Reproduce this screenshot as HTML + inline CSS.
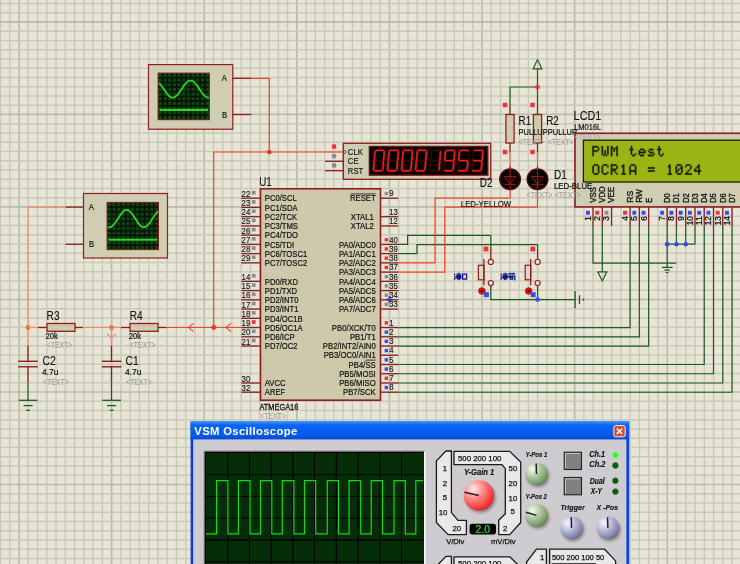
<!DOCTYPE html>
<html><head><meta charset="utf-8"><title>PWM test</title>
<style>html,body{margin:0;padding:0;background:#e8e5d7;overflow:hidden}#w{width:740px;height:564px;overflow:hidden;position:relative}svg{display:block;position:absolute;left:-12px;top:-12px;filter:blur(0.35px)}text{font-family:"Liberation Sans",sans-serif}.m{font-family:"Liberation Mono",monospace}</style>
</head><body><div id="w">
<svg width="764" height="588" viewBox="-12 -12 764 588">
<defs>
<radialGradient id="kr" cx="32%" cy="28%" r="78%"><stop offset="0" stop-color="#fff2f2"/><stop offset="0.3" stop-color="#ffa4a4"/><stop offset="0.65" stop-color="#ff5c5c"/><stop offset="1" stop-color="#dc2424"/></radialGradient>
<radialGradient id="kg" cx="32%" cy="28%" r="82%"><stop offset="0" stop-color="#f6faf0"/><stop offset="0.4" stop-color="#b4cca4"/><stop offset="0.8" stop-color="#7c9c6c"/><stop offset="1" stop-color="#547444"/></radialGradient>
<radialGradient id="kb" cx="32%" cy="28%" r="82%"><stop offset="0" stop-color="#f8f8ff"/><stop offset="0.4" stop-color="#bcbedc"/><stop offset="0.8" stop-color="#8486ac"/><stop offset="1" stop-color="#5c5e84"/></radialGradient>
<linearGradient id="tb" x1="0" y1="0" x2="0" y2="1"><stop offset="0" stop-color="#3a94ff"/><stop offset="0.2" stop-color="#0a64f4"/><stop offset="0.8" stop-color="#0458ec"/><stop offset="1" stop-color="#0246d2"/></linearGradient>
<filter id="glow" x="-20%" y="-20%" width="140%" height="140%"><feGaussianBlur stdDeviation="0.7"/></filter>
<filter id="sh" x="-30%" y="-30%" width="160%" height="160%"><feGaussianBlur stdDeviation="1.4"/></filter>
</defs>
<rect x="-12.00" y="-12.00" width="764.00" height="588.00" fill="#e8e5d7" stroke="none" stroke-width="1" />
<g shape-rendering="auto">
<line x1="-8.78" y1="-12.00" x2="-8.78" y2="576.00" stroke="#c8cab8" stroke-width="1.45" />
<line x1="0.48" y1="-12.00" x2="0.48" y2="576.00" stroke="#c8cab8" stroke-width="1.45" />
<line x1="9.74" y1="-12.00" x2="9.74" y2="576.00" stroke="#c8cab8" stroke-width="1.45" />
<line x1="19.00" y1="-12.00" x2="19.00" y2="576.00" stroke="#b7bca8" stroke-width="1.65" />
<line x1="28.26" y1="-12.00" x2="28.26" y2="576.00" stroke="#c8cab8" stroke-width="1.45" />
<line x1="37.52" y1="-12.00" x2="37.52" y2="576.00" stroke="#c8cab8" stroke-width="1.45" />
<line x1="46.78" y1="-12.00" x2="46.78" y2="576.00" stroke="#c8cab8" stroke-width="1.45" />
<line x1="56.04" y1="-12.00" x2="56.04" y2="576.00" stroke="#c8cab8" stroke-width="1.45" />
<line x1="65.30" y1="-12.00" x2="65.30" y2="576.00" stroke="#c8cab8" stroke-width="1.45" />
<line x1="74.57" y1="-12.00" x2="74.57" y2="576.00" stroke="#c8cab8" stroke-width="1.45" />
<line x1="83.83" y1="-12.00" x2="83.83" y2="576.00" stroke="#c8cab8" stroke-width="1.45" />
<line x1="93.09" y1="-12.00" x2="93.09" y2="576.00" stroke="#c8cab8" stroke-width="1.45" />
<line x1="102.35" y1="-12.00" x2="102.35" y2="576.00" stroke="#c8cab8" stroke-width="1.45" />
<line x1="111.61" y1="-12.00" x2="111.61" y2="576.00" stroke="#b7bca8" stroke-width="1.65" />
<line x1="120.87" y1="-12.00" x2="120.87" y2="576.00" stroke="#c8cab8" stroke-width="1.45" />
<line x1="130.13" y1="-12.00" x2="130.13" y2="576.00" stroke="#c8cab8" stroke-width="1.45" />
<line x1="139.39" y1="-12.00" x2="139.39" y2="576.00" stroke="#c8cab8" stroke-width="1.45" />
<line x1="148.65" y1="-12.00" x2="148.65" y2="576.00" stroke="#c8cab8" stroke-width="1.45" />
<line x1="157.91" y1="-12.00" x2="157.91" y2="576.00" stroke="#c8cab8" stroke-width="1.45" />
<line x1="167.18" y1="-12.00" x2="167.18" y2="576.00" stroke="#c8cab8" stroke-width="1.45" />
<line x1="176.44" y1="-12.00" x2="176.44" y2="576.00" stroke="#c8cab8" stroke-width="1.45" />
<line x1="185.70" y1="-12.00" x2="185.70" y2="576.00" stroke="#c8cab8" stroke-width="1.45" />
<line x1="194.96" y1="-12.00" x2="194.96" y2="576.00" stroke="#c8cab8" stroke-width="1.45" />
<line x1="204.22" y1="-12.00" x2="204.22" y2="576.00" stroke="#b7bca8" stroke-width="1.65" />
<line x1="213.48" y1="-12.00" x2="213.48" y2="576.00" stroke="#c8cab8" stroke-width="1.45" />
<line x1="222.74" y1="-12.00" x2="222.74" y2="576.00" stroke="#c8cab8" stroke-width="1.45" />
<line x1="232.00" y1="-12.00" x2="232.00" y2="576.00" stroke="#c8cab8" stroke-width="1.45" />
<line x1="241.26" y1="-12.00" x2="241.26" y2="576.00" stroke="#c8cab8" stroke-width="1.45" />
<line x1="250.52" y1="-12.00" x2="250.52" y2="576.00" stroke="#c8cab8" stroke-width="1.45" />
<line x1="259.79" y1="-12.00" x2="259.79" y2="576.00" stroke="#c8cab8" stroke-width="1.45" />
<line x1="269.05" y1="-12.00" x2="269.05" y2="576.00" stroke="#c8cab8" stroke-width="1.45" />
<line x1="278.31" y1="-12.00" x2="278.31" y2="576.00" stroke="#c8cab8" stroke-width="1.45" />
<line x1="287.57" y1="-12.00" x2="287.57" y2="576.00" stroke="#c8cab8" stroke-width="1.45" />
<line x1="296.83" y1="-12.00" x2="296.83" y2="576.00" stroke="#b7bca8" stroke-width="1.65" />
<line x1="306.09" y1="-12.00" x2="306.09" y2="576.00" stroke="#c8cab8" stroke-width="1.45" />
<line x1="315.35" y1="-12.00" x2="315.35" y2="576.00" stroke="#c8cab8" stroke-width="1.45" />
<line x1="324.61" y1="-12.00" x2="324.61" y2="576.00" stroke="#c8cab8" stroke-width="1.45" />
<line x1="333.87" y1="-12.00" x2="333.87" y2="576.00" stroke="#c8cab8" stroke-width="1.45" />
<line x1="343.13" y1="-12.00" x2="343.13" y2="576.00" stroke="#c8cab8" stroke-width="1.45" />
<line x1="352.40" y1="-12.00" x2="352.40" y2="576.00" stroke="#c8cab8" stroke-width="1.45" />
<line x1="361.66" y1="-12.00" x2="361.66" y2="576.00" stroke="#c8cab8" stroke-width="1.45" />
<line x1="370.92" y1="-12.00" x2="370.92" y2="576.00" stroke="#c8cab8" stroke-width="1.45" />
<line x1="380.18" y1="-12.00" x2="380.18" y2="576.00" stroke="#c8cab8" stroke-width="1.45" />
<line x1="389.44" y1="-12.00" x2="389.44" y2="576.00" stroke="#b7bca8" stroke-width="1.65" />
<line x1="398.70" y1="-12.00" x2="398.70" y2="576.00" stroke="#c8cab8" stroke-width="1.45" />
<line x1="407.96" y1="-12.00" x2="407.96" y2="576.00" stroke="#c8cab8" stroke-width="1.45" />
<line x1="417.22" y1="-12.00" x2="417.22" y2="576.00" stroke="#c8cab8" stroke-width="1.45" />
<line x1="426.48" y1="-12.00" x2="426.48" y2="576.00" stroke="#c8cab8" stroke-width="1.45" />
<line x1="435.74" y1="-12.00" x2="435.74" y2="576.00" stroke="#c8cab8" stroke-width="1.45" />
<line x1="445.01" y1="-12.00" x2="445.01" y2="576.00" stroke="#c8cab8" stroke-width="1.45" />
<line x1="454.27" y1="-12.00" x2="454.27" y2="576.00" stroke="#c8cab8" stroke-width="1.45" />
<line x1="463.53" y1="-12.00" x2="463.53" y2="576.00" stroke="#c8cab8" stroke-width="1.45" />
<line x1="472.79" y1="-12.00" x2="472.79" y2="576.00" stroke="#c8cab8" stroke-width="1.45" />
<line x1="482.05" y1="-12.00" x2="482.05" y2="576.00" stroke="#b7bca8" stroke-width="1.65" />
<line x1="491.31" y1="-12.00" x2="491.31" y2="576.00" stroke="#c8cab8" stroke-width="1.45" />
<line x1="500.57" y1="-12.00" x2="500.57" y2="576.00" stroke="#c8cab8" stroke-width="1.45" />
<line x1="509.83" y1="-12.00" x2="509.83" y2="576.00" stroke="#c8cab8" stroke-width="1.45" />
<line x1="519.09" y1="-12.00" x2="519.09" y2="576.00" stroke="#c8cab8" stroke-width="1.45" />
<line x1="528.36" y1="-12.00" x2="528.36" y2="576.00" stroke="#c8cab8" stroke-width="1.45" />
<line x1="537.62" y1="-12.00" x2="537.62" y2="576.00" stroke="#c8cab8" stroke-width="1.45" />
<line x1="546.88" y1="-12.00" x2="546.88" y2="576.00" stroke="#c8cab8" stroke-width="1.45" />
<line x1="556.14" y1="-12.00" x2="556.14" y2="576.00" stroke="#c8cab8" stroke-width="1.45" />
<line x1="565.40" y1="-12.00" x2="565.40" y2="576.00" stroke="#c8cab8" stroke-width="1.45" />
<line x1="574.66" y1="-12.00" x2="574.66" y2="576.00" stroke="#b7bca8" stroke-width="1.65" />
<line x1="583.92" y1="-12.00" x2="583.92" y2="576.00" stroke="#c8cab8" stroke-width="1.45" />
<line x1="593.18" y1="-12.00" x2="593.18" y2="576.00" stroke="#c8cab8" stroke-width="1.45" />
<line x1="602.44" y1="-12.00" x2="602.44" y2="576.00" stroke="#c8cab8" stroke-width="1.45" />
<line x1="611.70" y1="-12.00" x2="611.70" y2="576.00" stroke="#c8cab8" stroke-width="1.45" />
<line x1="620.96" y1="-12.00" x2="620.96" y2="576.00" stroke="#c8cab8" stroke-width="1.45" />
<line x1="630.23" y1="-12.00" x2="630.23" y2="576.00" stroke="#c8cab8" stroke-width="1.45" />
<line x1="639.49" y1="-12.00" x2="639.49" y2="576.00" stroke="#c8cab8" stroke-width="1.45" />
<line x1="648.75" y1="-12.00" x2="648.75" y2="576.00" stroke="#c8cab8" stroke-width="1.45" />
<line x1="658.01" y1="-12.00" x2="658.01" y2="576.00" stroke="#c8cab8" stroke-width="1.45" />
<line x1="667.27" y1="-12.00" x2="667.27" y2="576.00" stroke="#b7bca8" stroke-width="1.65" />
<line x1="676.53" y1="-12.00" x2="676.53" y2="576.00" stroke="#c8cab8" stroke-width="1.45" />
<line x1="685.79" y1="-12.00" x2="685.79" y2="576.00" stroke="#c8cab8" stroke-width="1.45" />
<line x1="695.05" y1="-12.00" x2="695.05" y2="576.00" stroke="#c8cab8" stroke-width="1.45" />
<line x1="704.31" y1="-12.00" x2="704.31" y2="576.00" stroke="#c8cab8" stroke-width="1.45" />
<line x1="713.57" y1="-12.00" x2="713.57" y2="576.00" stroke="#c8cab8" stroke-width="1.45" />
<line x1="722.84" y1="-12.00" x2="722.84" y2="576.00" stroke="#c8cab8" stroke-width="1.45" />
<line x1="732.10" y1="-12.00" x2="732.10" y2="576.00" stroke="#c8cab8" stroke-width="1.45" />
<line x1="741.36" y1="-12.00" x2="741.36" y2="576.00" stroke="#c8cab8" stroke-width="1.45" />
<line x1="750.62" y1="-12.00" x2="750.62" y2="576.00" stroke="#c8cab8" stroke-width="1.45" />
<line x1="-12.00" y1="-5.86" x2="752.00" y2="-5.86" stroke="#c8cab8" stroke-width="1.45" />
<line x1="-12.00" y1="3.40" x2="752.00" y2="3.40" stroke="#c8cab8" stroke-width="1.45" />
<line x1="-12.00" y1="12.65" x2="752.00" y2="12.65" stroke="#c8cab8" stroke-width="1.45" />
<line x1="-12.00" y1="21.90" x2="752.00" y2="21.90" stroke="#b7bca8" stroke-width="1.65" />
<line x1="-12.00" y1="31.15" x2="752.00" y2="31.15" stroke="#c8cab8" stroke-width="1.45" />
<line x1="-12.00" y1="40.40" x2="752.00" y2="40.40" stroke="#c8cab8" stroke-width="1.45" />
<line x1="-12.00" y1="49.66" x2="752.00" y2="49.66" stroke="#c8cab8" stroke-width="1.45" />
<line x1="-12.00" y1="58.91" x2="752.00" y2="58.91" stroke="#c8cab8" stroke-width="1.45" />
<line x1="-12.00" y1="68.16" x2="752.00" y2="68.16" stroke="#c8cab8" stroke-width="1.45" />
<line x1="-12.00" y1="77.41" x2="752.00" y2="77.41" stroke="#c8cab8" stroke-width="1.45" />
<line x1="-12.00" y1="86.66" x2="752.00" y2="86.66" stroke="#c8cab8" stroke-width="1.45" />
<line x1="-12.00" y1="95.92" x2="752.00" y2="95.92" stroke="#c8cab8" stroke-width="1.45" />
<line x1="-12.00" y1="105.17" x2="752.00" y2="105.17" stroke="#c8cab8" stroke-width="1.45" />
<line x1="-12.00" y1="114.42" x2="752.00" y2="114.42" stroke="#b7bca8" stroke-width="1.65" />
<line x1="-12.00" y1="123.67" x2="752.00" y2="123.67" stroke="#c8cab8" stroke-width="1.45" />
<line x1="-12.00" y1="132.92" x2="752.00" y2="132.92" stroke="#c8cab8" stroke-width="1.45" />
<line x1="-12.00" y1="142.18" x2="752.00" y2="142.18" stroke="#c8cab8" stroke-width="1.45" />
<line x1="-12.00" y1="151.43" x2="752.00" y2="151.43" stroke="#c8cab8" stroke-width="1.45" />
<line x1="-12.00" y1="160.68" x2="752.00" y2="160.68" stroke="#c8cab8" stroke-width="1.45" />
<line x1="-12.00" y1="169.93" x2="752.00" y2="169.93" stroke="#c8cab8" stroke-width="1.45" />
<line x1="-12.00" y1="179.18" x2="752.00" y2="179.18" stroke="#c8cab8" stroke-width="1.45" />
<line x1="-12.00" y1="188.44" x2="752.00" y2="188.44" stroke="#c8cab8" stroke-width="1.45" />
<line x1="-12.00" y1="197.69" x2="752.00" y2="197.69" stroke="#c8cab8" stroke-width="1.45" />
<line x1="-12.00" y1="206.94" x2="752.00" y2="206.94" stroke="#b7bca8" stroke-width="1.65" />
<line x1="-12.00" y1="216.19" x2="752.00" y2="216.19" stroke="#c8cab8" stroke-width="1.45" />
<line x1="-12.00" y1="225.44" x2="752.00" y2="225.44" stroke="#c8cab8" stroke-width="1.45" />
<line x1="-12.00" y1="234.70" x2="752.00" y2="234.70" stroke="#c8cab8" stroke-width="1.45" />
<line x1="-12.00" y1="243.95" x2="752.00" y2="243.95" stroke="#c8cab8" stroke-width="1.45" />
<line x1="-12.00" y1="253.20" x2="752.00" y2="253.20" stroke="#c8cab8" stroke-width="1.45" />
<line x1="-12.00" y1="262.45" x2="752.00" y2="262.45" stroke="#c8cab8" stroke-width="1.45" />
<line x1="-12.00" y1="271.70" x2="752.00" y2="271.70" stroke="#c8cab8" stroke-width="1.45" />
<line x1="-12.00" y1="280.96" x2="752.00" y2="280.96" stroke="#c8cab8" stroke-width="1.45" />
<line x1="-12.00" y1="290.21" x2="752.00" y2="290.21" stroke="#c8cab8" stroke-width="1.45" />
<line x1="-12.00" y1="299.46" x2="752.00" y2="299.46" stroke="#b7bca8" stroke-width="1.65" />
<line x1="-12.00" y1="308.71" x2="752.00" y2="308.71" stroke="#c8cab8" stroke-width="1.45" />
<line x1="-12.00" y1="317.96" x2="752.00" y2="317.96" stroke="#c8cab8" stroke-width="1.45" />
<line x1="-12.00" y1="327.22" x2="752.00" y2="327.22" stroke="#c8cab8" stroke-width="1.45" />
<line x1="-12.00" y1="336.47" x2="752.00" y2="336.47" stroke="#c8cab8" stroke-width="1.45" />
<line x1="-12.00" y1="345.72" x2="752.00" y2="345.72" stroke="#c8cab8" stroke-width="1.45" />
<line x1="-12.00" y1="354.97" x2="752.00" y2="354.97" stroke="#c8cab8" stroke-width="1.45" />
<line x1="-12.00" y1="364.22" x2="752.00" y2="364.22" stroke="#c8cab8" stroke-width="1.45" />
<line x1="-12.00" y1="373.48" x2="752.00" y2="373.48" stroke="#c8cab8" stroke-width="1.45" />
<line x1="-12.00" y1="382.73" x2="752.00" y2="382.73" stroke="#c8cab8" stroke-width="1.45" />
<line x1="-12.00" y1="391.98" x2="752.00" y2="391.98" stroke="#b7bca8" stroke-width="1.65" />
<line x1="-12.00" y1="401.23" x2="752.00" y2="401.23" stroke="#c8cab8" stroke-width="1.45" />
<line x1="-12.00" y1="410.48" x2="752.00" y2="410.48" stroke="#c8cab8" stroke-width="1.45" />
<line x1="-12.00" y1="419.74" x2="752.00" y2="419.74" stroke="#c8cab8" stroke-width="1.45" />
<line x1="-12.00" y1="428.99" x2="752.00" y2="428.99" stroke="#c8cab8" stroke-width="1.45" />
<line x1="-12.00" y1="438.24" x2="752.00" y2="438.24" stroke="#c8cab8" stroke-width="1.45" />
<line x1="-12.00" y1="447.49" x2="752.00" y2="447.49" stroke="#c8cab8" stroke-width="1.45" />
<line x1="-12.00" y1="456.74" x2="752.00" y2="456.74" stroke="#c8cab8" stroke-width="1.45" />
<line x1="-12.00" y1="466.00" x2="752.00" y2="466.00" stroke="#c8cab8" stroke-width="1.45" />
<line x1="-12.00" y1="475.25" x2="752.00" y2="475.25" stroke="#c8cab8" stroke-width="1.45" />
<line x1="-12.00" y1="484.50" x2="752.00" y2="484.50" stroke="#b7bca8" stroke-width="1.65" />
<line x1="-12.00" y1="493.75" x2="752.00" y2="493.75" stroke="#c8cab8" stroke-width="1.45" />
<line x1="-12.00" y1="503.00" x2="752.00" y2="503.00" stroke="#c8cab8" stroke-width="1.45" />
<line x1="-12.00" y1="512.26" x2="752.00" y2="512.26" stroke="#c8cab8" stroke-width="1.45" />
<line x1="-12.00" y1="521.51" x2="752.00" y2="521.51" stroke="#c8cab8" stroke-width="1.45" />
<line x1="-12.00" y1="530.76" x2="752.00" y2="530.76" stroke="#c8cab8" stroke-width="1.45" />
<line x1="-12.00" y1="540.01" x2="752.00" y2="540.01" stroke="#c8cab8" stroke-width="1.45" />
<line x1="-12.00" y1="549.26" x2="752.00" y2="549.26" stroke="#c8cab8" stroke-width="1.45" />
<line x1="-12.00" y1="558.52" x2="752.00" y2="558.52" stroke="#c8cab8" stroke-width="1.45" />
<line x1="-12.00" y1="567.77" x2="752.00" y2="567.77" stroke="#c8cab8" stroke-width="1.45" />
</g>
<rect x="148.50" y="64.60" width="84.30" height="64.60" fill="#d1cdb3" stroke="#8c1f22" stroke-width="1.2" />
<rect x="158.10" y="73.10" width="51.30" height="46.60" fill="#0c460e" stroke="#7a1a1a" stroke-width="1.0" />
<line x1="162.76" y1="73.60" x2="162.76" y2="119.20" stroke="#011001" stroke-width="1.5" />
<line x1="167.43" y1="73.60" x2="167.43" y2="119.20" stroke="#011001" stroke-width="1.5" />
<line x1="172.09" y1="73.60" x2="172.09" y2="119.20" stroke="#011001" stroke-width="1.5" />
<line x1="176.75" y1="73.60" x2="176.75" y2="119.20" stroke="#011001" stroke-width="1.5" />
<line x1="181.42" y1="73.60" x2="181.42" y2="119.20" stroke="#011001" stroke-width="1.5" />
<line x1="186.08" y1="73.60" x2="186.08" y2="119.20" stroke="#011001" stroke-width="1.5" />
<line x1="190.75" y1="73.60" x2="190.75" y2="119.20" stroke="#011001" stroke-width="1.5" />
<line x1="195.41" y1="73.60" x2="195.41" y2="119.20" stroke="#011001" stroke-width="1.5" />
<line x1="200.07" y1="73.60" x2="200.07" y2="119.20" stroke="#011001" stroke-width="1.5" />
<line x1="204.74" y1="73.60" x2="204.74" y2="119.20" stroke="#011001" stroke-width="1.5" />
<line x1="158.60" y1="77.76" x2="208.90" y2="77.76" stroke="#011001" stroke-width="1.5" />
<line x1="158.60" y1="82.42" x2="208.90" y2="82.42" stroke="#011001" stroke-width="1.5" />
<line x1="158.60" y1="87.08" x2="208.90" y2="87.08" stroke="#011001" stroke-width="1.5" />
<line x1="158.60" y1="91.74" x2="208.90" y2="91.74" stroke="#011001" stroke-width="1.5" />
<line x1="158.60" y1="96.40" x2="208.90" y2="96.40" stroke="#011001" stroke-width="1.5" />
<line x1="158.60" y1="101.06" x2="208.90" y2="101.06" stroke="#011001" stroke-width="1.5" />
<line x1="158.60" y1="105.72" x2="208.90" y2="105.72" stroke="#011001" stroke-width="1.5" />
<line x1="158.60" y1="110.38" x2="208.90" y2="110.38" stroke="#011001" stroke-width="1.5" />
<line x1="158.60" y1="115.04" x2="208.90" y2="115.04" stroke="#011001" stroke-width="1.5" />
<polyline points="159.50,83.30 160.72,84.77 161.94,86.44 163.17,88.24 164.39,90.07 165.61,91.85 166.84,93.51 168.06,94.97 169.28,96.15 170.50,97.01 171.72,97.50 172.95,97.60 174.17,97.31 175.39,96.64 176.62,95.62 177.84,94.30 179.06,92.74 180.28,91.01 181.50,89.20 182.73,87.37 183.95,85.63 185.17,84.04 186.40,82.69 187.62,81.63 188.84,80.92 190.06,80.58 191.28,80.64 192.51,81.08 193.73,81.90 194.95,83.04 196.18,84.47 197.40,86.10 198.62,87.88 199.84,89.71 201.06,91.51 202.29,93.20 203.51,94.70 204.73,95.94 205.95,96.87 207.18,97.43 208.40,97.61" fill="none" stroke="#2cd42c" stroke-width="1.8" stroke-linejoin="round" stroke-linecap="round"/>
<line x1="159.50" y1="109.91" x2="208.20" y2="109.91" stroke="#2cd42c" stroke-width="2.1" />
<text transform="translate(221.70,81.20) scale(0.86,1)" font-size="9.0" fill="#111" text-anchor="start" font-weight="normal" font-style="normal"  stroke="#111" stroke-width="0.2">A</text>
<text transform="translate(222.00,117.50) scale(0.86,1)" font-size="9.0" fill="#111" text-anchor="start" font-weight="normal" font-style="normal"  stroke="#111" stroke-width="0.2">B</text>
<line x1="232.50" y1="78.30" x2="251.30" y2="78.30" stroke="#8c1f22" stroke-width="1.3" />
<line x1="232.50" y1="114.50" x2="251.30" y2="114.50" stroke="#8c1f22" stroke-width="1.3" />
<rect x="83.50" y="193.50" width="84.00" height="64.50" fill="#d1cdb3" stroke="#8c1f22" stroke-width="1.2" />
<rect x="107.10" y="202.40" width="51.40" height="47.20" fill="#0c460e" stroke="#7a1a1a" stroke-width="1.0" />
<line x1="111.77" y1="202.90" x2="111.77" y2="249.10" stroke="#011001" stroke-width="1.5" />
<line x1="116.45" y1="202.90" x2="116.45" y2="249.10" stroke="#011001" stroke-width="1.5" />
<line x1="121.12" y1="202.90" x2="121.12" y2="249.10" stroke="#011001" stroke-width="1.5" />
<line x1="125.79" y1="202.90" x2="125.79" y2="249.10" stroke="#011001" stroke-width="1.5" />
<line x1="130.46" y1="202.90" x2="130.46" y2="249.10" stroke="#011001" stroke-width="1.5" />
<line x1="135.14" y1="202.90" x2="135.14" y2="249.10" stroke="#011001" stroke-width="1.5" />
<line x1="139.81" y1="202.90" x2="139.81" y2="249.10" stroke="#011001" stroke-width="1.5" />
<line x1="144.48" y1="202.90" x2="144.48" y2="249.10" stroke="#011001" stroke-width="1.5" />
<line x1="149.15" y1="202.90" x2="149.15" y2="249.10" stroke="#011001" stroke-width="1.5" />
<line x1="153.83" y1="202.90" x2="153.83" y2="249.10" stroke="#011001" stroke-width="1.5" />
<line x1="107.60" y1="207.12" x2="158.00" y2="207.12" stroke="#011001" stroke-width="1.5" />
<line x1="107.60" y1="211.84" x2="158.00" y2="211.84" stroke="#011001" stroke-width="1.5" />
<line x1="107.60" y1="216.56" x2="158.00" y2="216.56" stroke="#011001" stroke-width="1.5" />
<line x1="107.60" y1="221.28" x2="158.00" y2="221.28" stroke="#011001" stroke-width="1.5" />
<line x1="107.60" y1="226.00" x2="158.00" y2="226.00" stroke="#011001" stroke-width="1.5" />
<line x1="107.60" y1="230.72" x2="158.00" y2="230.72" stroke="#011001" stroke-width="1.5" />
<line x1="107.60" y1="235.44" x2="158.00" y2="235.44" stroke="#011001" stroke-width="1.5" />
<line x1="107.60" y1="240.16" x2="158.00" y2="240.16" stroke="#011001" stroke-width="1.5" />
<line x1="107.60" y1="244.88" x2="158.00" y2="244.88" stroke="#011001" stroke-width="1.5" />
<polyline points="108.50,227.12 109.72,227.21 110.95,226.88 112.17,226.13 113.40,225.01 114.62,223.57 115.85,221.89 117.08,220.04 118.30,218.12 119.53,216.23 120.75,214.45 121.97,212.87 123.20,211.58 124.42,210.64 125.65,210.09 126.88,209.96 128.10,210.26 129.32,210.97 130.55,212.06 131.78,213.47 133.00,215.14 134.22,216.98 135.45,218.89 136.68,220.80 137.90,222.59 139.12,224.18 140.35,225.50 141.57,226.48 142.80,227.06 144.03,227.22 145.25,226.96 146.47,226.28 147.70,225.22 148.93,223.84 150.15,222.19 151.38,220.36 152.60,218.45 153.82,216.54 155.05,214.74 156.28,213.12 157.50,211.78" fill="none" stroke="#2cd42c" stroke-width="1.8" stroke-linejoin="round" stroke-linecap="round"/>
<line x1="108.50" y1="239.69" x2="157.30" y2="239.69" stroke="#2cd42c" stroke-width="2.1" />
<text transform="translate(88.80,210.40) scale(0.86,1)" font-size="9.0" fill="#111" text-anchor="start" font-weight="normal" font-style="normal"  stroke="#111" stroke-width="0.2">A</text>
<text transform="translate(89.00,247.30) scale(0.86,1)" font-size="9.0" fill="#111" text-anchor="start" font-weight="normal" font-style="normal"  stroke="#111" stroke-width="0.2">B</text>
<line x1="65.50" y1="207.10" x2="83.30" y2="207.10" stroke="#8c1f22" stroke-width="1.3" />
<line x1="65.50" y1="244.30" x2="83.30" y2="244.30" stroke="#8c1f22" stroke-width="1.3" />
<polyline points="251.30,78.30 269.30,78.30 269.30,152.00" fill="none" stroke="#f2462c" stroke-width="1.2" />
<polyline points="213.70,327.50 213.70,152.00 325.00,152.00" fill="none" stroke="#f2462c" stroke-width="1.2" />
<circle cx="269.30" cy="152.00" r="2.30" fill="#f03020" stroke="none" stroke-width="1" />
<polyline points="65.50,207.10 28.00,207.10 28.00,345.50" fill="none" stroke="#f28a66" stroke-width="1.2" />
<circle cx="28.00" cy="327.50" r="2.40" fill="#f0703c" stroke="none" stroke-width="1" />
<line x1="28.00" y1="327.50" x2="38.00" y2="327.50" stroke="#f28a66" stroke-width="1.2" />
<line x1="82.50" y1="327.50" x2="121.00" y2="327.50" stroke="#f28a66" stroke-width="1.2" />
<circle cx="111.50" cy="327.50" r="2.40" fill="#f0703c" stroke="none" stroke-width="1" />
<line x1="111.50" y1="327.50" x2="111.50" y2="345.50" stroke="#f28a66" stroke-width="1.2" />
<polyline points="107.20,334.00 111.50,338.50 115.80,334.00" fill="none" stroke="#f28a66" stroke-width="1.1" />
<line x1="165.80" y1="327.50" x2="241.30" y2="327.50" stroke="#f2462c" stroke-width="1.2" />
<circle cx="213.70" cy="327.50" r="2.40" fill="#f03020" stroke="none" stroke-width="1" />
<polyline points="193.50,323.30 188.50,327.50 193.50,331.70" fill="none" stroke="#f2462c" stroke-width="1.1" />
<polyline points="231.00,323.30 226.00,327.50 231.00,331.70" fill="none" stroke="#f2462c" stroke-width="1.1" />
<polyline points="182.00,323.30 187.00,327.50 182.00,331.70" fill="none" stroke="#f2462c" stroke-width="1.1" opacity="0"/>
<line x1="38.00" y1="327.50" x2="47.00" y2="327.50" stroke="#8c1f22" stroke-width="1.3" />
<rect x="47.00" y="323.50" width="28.00" height="7.80" fill="#cfccae" stroke="#8c1f22" stroke-width="1.3" />
<line x1="75.00" y1="327.50" x2="83.00" y2="327.50" stroke="#8c1f22" stroke-width="1.3" />
<text transform="translate(46.60,320.30) scale(0.82,1)" font-size="12.3" fill="#111" text-anchor="start" font-weight="normal" font-style="normal"  stroke="#111" stroke-width="0.12">R3</text>
<text transform="translate(45.60,339.00) scale(0.86,1)" font-size="8.9" fill="#111" text-anchor="start" font-weight="normal" font-style="normal"  stroke="#111" stroke-width="0.2">20k</text>
<text transform="translate(46.60,347.50) scale(0.78,1)" font-size="8.9" fill="#9a9a9a" text-anchor="start" font-weight="normal" font-style="normal" >&lt;TEXT&gt;</text>
<line x1="121.00" y1="327.50" x2="130.00" y2="327.50" stroke="#8c1f22" stroke-width="1.3" />
<rect x="130.00" y="323.50" width="28.00" height="7.80" fill="#cfccae" stroke="#8c1f22" stroke-width="1.3" />
<line x1="158.00" y1="327.50" x2="166.00" y2="327.50" stroke="#8c1f22" stroke-width="1.3" />
<text transform="translate(129.80,320.30) scale(0.82,1)" font-size="12.3" fill="#111" text-anchor="start" font-weight="normal" font-style="normal"  stroke="#111" stroke-width="0.12">R4</text>
<text transform="translate(128.80,339.00) scale(0.86,1)" font-size="8.9" fill="#111" text-anchor="start" font-weight="normal" font-style="normal"  stroke="#111" stroke-width="0.2">20k</text>
<text transform="translate(129.80,347.50) scale(0.78,1)" font-size="8.9" fill="#9a9a9a" text-anchor="start" font-weight="normal" font-style="normal" >&lt;TEXT&gt;</text>
<line x1="28.00" y1="345.50" x2="28.00" y2="361.30" stroke="#8c1f22" stroke-width="1.3" />
<line x1="18.30" y1="361.30" x2="37.90" y2="361.30" stroke="#8c1f22" stroke-width="1.4" />
<line x1="18.30" y1="366.80" x2="37.90" y2="366.80" stroke="#8c1f22" stroke-width="1.4" />
<line x1="28.00" y1="366.80" x2="28.00" y2="382.50" stroke="#8c1f22" stroke-width="1.3" />
<line x1="28.00" y1="382.50" x2="28.00" y2="400.30" stroke="#1e5c20" stroke-width="1.2" />
<line x1="18.70" y1="400.30" x2="37.50" y2="400.30" stroke="#1e5c20" stroke-width="1.3" />
<line x1="23.60" y1="405.60" x2="32.60" y2="405.60" stroke="#1e5c20" stroke-width="1.3" />
<line x1="26.20" y1="410.30" x2="30.00" y2="410.30" stroke="#1e5c20" stroke-width="1.3" />
<text transform="translate(42.40,365.40) scale(0.83,1)" font-size="12.5" fill="#111" text-anchor="start" font-weight="normal" font-style="normal"  stroke="#111" stroke-width="0.12">C2</text>
<text transform="translate(41.90,375.10) scale(0.92,1)" font-size="9.2" fill="#111" text-anchor="start" font-weight="normal" font-style="normal"  stroke="#111" stroke-width="0.2">4.7u</text>
<text transform="translate(42.90,384.80) scale(0.78,1)" font-size="8.9" fill="#9a9a9a" text-anchor="start" font-weight="normal" font-style="normal" >&lt;TEXT&gt;</text>
<line x1="111.50" y1="345.50" x2="111.50" y2="361.30" stroke="#8c1f22" stroke-width="1.3" />
<line x1="101.80" y1="361.30" x2="121.40" y2="361.30" stroke="#8c1f22" stroke-width="1.4" />
<line x1="101.80" y1="366.80" x2="121.40" y2="366.80" stroke="#8c1f22" stroke-width="1.4" />
<line x1="111.50" y1="366.80" x2="111.50" y2="382.50" stroke="#8c1f22" stroke-width="1.3" />
<line x1="111.50" y1="382.50" x2="111.50" y2="400.30" stroke="#1e5c20" stroke-width="1.2" />
<line x1="102.20" y1="400.30" x2="121.00" y2="400.30" stroke="#1e5c20" stroke-width="1.3" />
<line x1="107.10" y1="405.60" x2="116.10" y2="405.60" stroke="#1e5c20" stroke-width="1.3" />
<line x1="109.70" y1="410.30" x2="113.50" y2="410.30" stroke="#1e5c20" stroke-width="1.3" />
<text transform="translate(125.40,365.40) scale(0.83,1)" font-size="12.5" fill="#111" text-anchor="start" font-weight="normal" font-style="normal"  stroke="#111" stroke-width="0.12">C1</text>
<text transform="translate(124.90,375.10) scale(0.92,1)" font-size="9.2" fill="#111" text-anchor="start" font-weight="normal" font-style="normal"  stroke="#111" stroke-width="0.2">4.7u</text>
<text transform="translate(125.90,384.80) scale(0.78,1)" font-size="8.9" fill="#9a9a9a" text-anchor="start" font-weight="normal" font-style="normal" >&lt;TEXT&gt;</text>
<rect x="260.50" y="188.80" width="120.00" height="211.40" fill="#cdc9aa" stroke="#8c1f22" stroke-width="1.6" />
<text transform="translate(259.20,186.30) scale(0.8,1)" font-size="12.3" fill="#111" text-anchor="start" font-weight="normal" font-style="normal"  stroke="#111" stroke-width="0.12">U1</text>
<text transform="translate(259.50,409.60) scale(0.83,1)" font-size="8.9" fill="#111" text-anchor="start" font-weight="normal" font-style="normal"  stroke="#111" stroke-width="0.3">ATMEGA16</text>
<text transform="translate(260.20,418.60) scale(0.78,1)" font-size="8.9" fill="#9a9a9a" text-anchor="start" font-weight="normal" font-style="normal" >&lt;TEXT&gt;</text>
<line x1="241.30" y1="198.20" x2="260.50" y2="198.20" stroke="#8c1f22" stroke-width="1.3" />
<text transform="translate(241.60,196.70) scale(0.86,1)" font-size="9.0" fill="#111" text-anchor="start" font-weight="normal" font-style="normal"  stroke="#111" stroke-width="0.15">22</text>
<rect x="251.90" y="190.80" width="3.70" height="3.70" fill="#8c8c96" stroke="none" stroke-width="1" />
<text transform="translate(264.80,201.40) scale(0.86,1)" font-size="8.9" fill="#111" text-anchor="start" font-weight="normal" font-style="normal"  stroke="#111" stroke-width="0.2">PC0/SCL</text>
<line x1="241.30" y1="207.44" x2="260.50" y2="207.44" stroke="#8c1f22" stroke-width="1.3" />
<text transform="translate(241.60,205.94) scale(0.86,1)" font-size="9.0" fill="#111" text-anchor="start" font-weight="normal" font-style="normal"  stroke="#111" stroke-width="0.15">23</text>
<rect x="251.90" y="200.04" width="3.70" height="3.70" fill="#8c8c96" stroke="none" stroke-width="1" />
<text transform="translate(264.80,210.64) scale(0.86,1)" font-size="8.9" fill="#111" text-anchor="start" font-weight="normal" font-style="normal"  stroke="#111" stroke-width="0.2">PC1/SDA</text>
<line x1="241.30" y1="216.68" x2="260.50" y2="216.68" stroke="#8c1f22" stroke-width="1.3" />
<text transform="translate(241.60,215.18) scale(0.86,1)" font-size="9.0" fill="#111" text-anchor="start" font-weight="normal" font-style="normal"  stroke="#111" stroke-width="0.15">24</text>
<rect x="251.90" y="209.28" width="3.70" height="3.70" fill="#8c8c96" stroke="none" stroke-width="1" />
<text transform="translate(264.80,219.88) scale(0.86,1)" font-size="8.9" fill="#111" text-anchor="start" font-weight="normal" font-style="normal"  stroke="#111" stroke-width="0.2">PC2/TCK</text>
<line x1="241.30" y1="225.92" x2="260.50" y2="225.92" stroke="#8c1f22" stroke-width="1.3" />
<text transform="translate(241.60,224.42) scale(0.86,1)" font-size="9.0" fill="#111" text-anchor="start" font-weight="normal" font-style="normal"  stroke="#111" stroke-width="0.15">25</text>
<rect x="251.90" y="218.52" width="3.70" height="3.70" fill="#8c8c96" stroke="none" stroke-width="1" />
<text transform="translate(264.80,229.12) scale(0.86,1)" font-size="8.9" fill="#111" text-anchor="start" font-weight="normal" font-style="normal"  stroke="#111" stroke-width="0.2">PC3/TMS</text>
<line x1="241.30" y1="235.16" x2="260.50" y2="235.16" stroke="#8c1f22" stroke-width="1.3" />
<text transform="translate(241.60,233.66) scale(0.86,1)" font-size="9.0" fill="#111" text-anchor="start" font-weight="normal" font-style="normal"  stroke="#111" stroke-width="0.15">26</text>
<rect x="251.90" y="227.76" width="3.70" height="3.70" fill="#8c8c96" stroke="none" stroke-width="1" />
<text transform="translate(264.80,238.36) scale(0.86,1)" font-size="8.9" fill="#111" text-anchor="start" font-weight="normal" font-style="normal"  stroke="#111" stroke-width="0.2">PC4/TDO</text>
<line x1="241.30" y1="244.40" x2="260.50" y2="244.40" stroke="#8c1f22" stroke-width="1.3" />
<text transform="translate(241.60,242.90) scale(0.86,1)" font-size="9.0" fill="#111" text-anchor="start" font-weight="normal" font-style="normal"  stroke="#111" stroke-width="0.15">27</text>
<rect x="251.90" y="237.00" width="3.70" height="3.70" fill="#8c8c96" stroke="none" stroke-width="1" />
<text transform="translate(264.80,247.60) scale(0.86,1)" font-size="8.9" fill="#111" text-anchor="start" font-weight="normal" font-style="normal"  stroke="#111" stroke-width="0.2">PC5/TDI</text>
<line x1="241.30" y1="253.64" x2="260.50" y2="253.64" stroke="#8c1f22" stroke-width="1.3" />
<text transform="translate(241.60,252.14) scale(0.86,1)" font-size="9.0" fill="#111" text-anchor="start" font-weight="normal" font-style="normal"  stroke="#111" stroke-width="0.15">28</text>
<rect x="251.90" y="246.24" width="3.70" height="3.70" fill="#8c8c96" stroke="none" stroke-width="1" />
<text transform="translate(264.80,256.84) scale(0.86,1)" font-size="8.9" fill="#111" text-anchor="start" font-weight="normal" font-style="normal"  stroke="#111" stroke-width="0.2">PC6/TOSC1</text>
<line x1="241.30" y1="262.88" x2="260.50" y2="262.88" stroke="#8c1f22" stroke-width="1.3" />
<text transform="translate(241.60,261.38) scale(0.86,1)" font-size="9.0" fill="#111" text-anchor="start" font-weight="normal" font-style="normal"  stroke="#111" stroke-width="0.15">29</text>
<rect x="251.90" y="255.48" width="3.70" height="3.70" fill="#8c8c96" stroke="none" stroke-width="1" />
<text transform="translate(264.80,266.08) scale(0.86,1)" font-size="8.9" fill="#111" text-anchor="start" font-weight="normal" font-style="normal"  stroke="#111" stroke-width="0.2">PC7/TOSC2</text>
<line x1="241.30" y1="281.36" x2="260.50" y2="281.36" stroke="#8c1f22" stroke-width="1.3" />
<text transform="translate(241.60,279.86) scale(0.86,1)" font-size="9.0" fill="#111" text-anchor="start" font-weight="normal" font-style="normal"  stroke="#111" stroke-width="0.15">14</text>
<rect x="251.90" y="273.96" width="3.70" height="3.70" fill="#8c8c96" stroke="none" stroke-width="1" />
<text transform="translate(264.80,284.56) scale(0.86,1)" font-size="8.9" fill="#111" text-anchor="start" font-weight="normal" font-style="normal"  stroke="#111" stroke-width="0.2">PD0/RXD</text>
<line x1="241.30" y1="290.60" x2="260.50" y2="290.60" stroke="#8c1f22" stroke-width="1.3" />
<text transform="translate(241.60,289.10) scale(0.86,1)" font-size="9.0" fill="#111" text-anchor="start" font-weight="normal" font-style="normal"  stroke="#111" stroke-width="0.15">15</text>
<rect x="251.90" y="283.20" width="3.70" height="3.70" fill="#8c8c96" stroke="none" stroke-width="1" />
<text transform="translate(264.80,293.80) scale(0.86,1)" font-size="8.9" fill="#111" text-anchor="start" font-weight="normal" font-style="normal"  stroke="#111" stroke-width="0.2">PD1/TXD</text>
<line x1="241.30" y1="299.84" x2="260.50" y2="299.84" stroke="#8c1f22" stroke-width="1.3" />
<text transform="translate(241.60,298.34) scale(0.86,1)" font-size="9.0" fill="#111" text-anchor="start" font-weight="normal" font-style="normal"  stroke="#111" stroke-width="0.15">16</text>
<rect x="251.90" y="292.44" width="3.70" height="3.70" fill="#8c8c96" stroke="none" stroke-width="1" />
<text transform="translate(264.80,303.04) scale(0.86,1)" font-size="8.9" fill="#111" text-anchor="start" font-weight="normal" font-style="normal"  stroke="#111" stroke-width="0.2">PD2/INT0</text>
<line x1="241.30" y1="309.08" x2="260.50" y2="309.08" stroke="#8c1f22" stroke-width="1.3" />
<text transform="translate(241.60,307.58) scale(0.86,1)" font-size="9.0" fill="#111" text-anchor="start" font-weight="normal" font-style="normal"  stroke="#111" stroke-width="0.15">17</text>
<rect x="251.90" y="301.68" width="3.70" height="3.70" fill="#8c8c96" stroke="none" stroke-width="1" />
<text transform="translate(264.80,312.28) scale(0.86,1)" font-size="8.9" fill="#111" text-anchor="start" font-weight="normal" font-style="normal"  stroke="#111" stroke-width="0.2">PD3/INT1</text>
<line x1="241.30" y1="318.32" x2="260.50" y2="318.32" stroke="#8c1f22" stroke-width="1.3" />
<text transform="translate(241.60,316.82) scale(0.86,1)" font-size="9.0" fill="#111" text-anchor="start" font-weight="normal" font-style="normal"  stroke="#111" stroke-width="0.15">18</text>
<rect x="251.90" y="310.92" width="3.70" height="3.70" fill="#8c8c96" stroke="none" stroke-width="1" />
<text transform="translate(264.80,321.52) scale(0.86,1)" font-size="8.9" fill="#111" text-anchor="start" font-weight="normal" font-style="normal"  stroke="#111" stroke-width="0.2">PD4/OC1B</text>
<line x1="241.30" y1="327.56" x2="260.50" y2="327.56" stroke="#8c1f22" stroke-width="1.3" />
<text transform="translate(241.60,326.06) scale(0.86,1)" font-size="9.0" fill="#111" text-anchor="start" font-weight="normal" font-style="normal"  stroke="#111" stroke-width="0.15">19</text>
<rect x="251.90" y="320.16" width="3.70" height="3.70" fill="#f0323f" stroke="none" stroke-width="1" />
<text transform="translate(264.80,330.76) scale(0.86,1)" font-size="8.9" fill="#111" text-anchor="start" font-weight="normal" font-style="normal"  stroke="#111" stroke-width="0.2">PD5/OC1A</text>
<line x1="241.30" y1="336.80" x2="260.50" y2="336.80" stroke="#8c1f22" stroke-width="1.3" />
<text transform="translate(241.60,335.30) scale(0.86,1)" font-size="9.0" fill="#111" text-anchor="start" font-weight="normal" font-style="normal"  stroke="#111" stroke-width="0.15">20</text>
<rect x="251.90" y="329.40" width="3.70" height="3.70" fill="#8c8c96" stroke="none" stroke-width="1" />
<text transform="translate(264.80,340.00) scale(0.86,1)" font-size="8.9" fill="#111" text-anchor="start" font-weight="normal" font-style="normal"  stroke="#111" stroke-width="0.2">PD6/ICP</text>
<line x1="241.30" y1="346.04" x2="260.50" y2="346.04" stroke="#8c1f22" stroke-width="1.3" />
<text transform="translate(241.60,344.54) scale(0.86,1)" font-size="9.0" fill="#111" text-anchor="start" font-weight="normal" font-style="normal"  stroke="#111" stroke-width="0.15">21</text>
<rect x="251.90" y="338.64" width="3.70" height="3.70" fill="#8c8c96" stroke="none" stroke-width="1" />
<text transform="translate(264.80,349.24) scale(0.86,1)" font-size="8.9" fill="#111" text-anchor="start" font-weight="normal" font-style="normal"  stroke="#111" stroke-width="0.2">PD7/OC2</text>
<line x1="241.30" y1="383.00" x2="260.50" y2="383.00" stroke="#8c1f22" stroke-width="1.3" />
<text transform="translate(241.60,381.50) scale(0.86,1)" font-size="9.0" fill="#111" text-anchor="start" font-weight="normal" font-style="normal"  stroke="#111" stroke-width="0.15">30</text>
<text transform="translate(264.80,386.20) scale(0.86,1)" font-size="8.9" fill="#111" text-anchor="start" font-weight="normal" font-style="normal"  stroke="#111" stroke-width="0.2">AVCC</text>
<line x1="241.30" y1="392.24" x2="260.50" y2="392.24" stroke="#8c1f22" stroke-width="1.3" />
<text transform="translate(241.60,390.74) scale(0.86,1)" font-size="9.0" fill="#111" text-anchor="start" font-weight="normal" font-style="normal"  stroke="#111" stroke-width="0.15">32</text>
<text transform="translate(264.80,395.44) scale(0.86,1)" font-size="8.9" fill="#111" text-anchor="start" font-weight="normal" font-style="normal"  stroke="#111" stroke-width="0.2">AREF</text>
<line x1="380.50" y1="198.20" x2="398.30" y2="198.20" stroke="#8c1f22" stroke-width="1.3" />
<text transform="translate(389.30,196.40) scale(0.86,1)" font-size="9.0" fill="#111" text-anchor="start" font-weight="normal" font-style="normal"  stroke="#111" stroke-width="0.15">9</text>
<rect x="384.60" y="191.80" width="3.40" height="3.40" fill="#8c8c96" stroke="none" stroke-width="1" />
<text transform="translate(375.70,201.40) scale(0.87,1)" font-size="8.9" fill="#111" text-anchor="end" font-weight="normal" font-style="normal"  stroke="#111" stroke-width="0.2">RESET</text>
<line x1="350.40" y1="193.90" x2="375.60" y2="193.90" stroke="#111" stroke-width="0.8" />
<line x1="380.50" y1="216.68" x2="398.30" y2="216.68" stroke="#8c1f22" stroke-width="1.3" />
<text transform="translate(389.30,214.88) scale(0.86,1)" font-size="9.0" fill="#111" text-anchor="start" font-weight="normal" font-style="normal"  stroke="#111" stroke-width="0.15">13</text>
<text transform="translate(373.80,219.88) scale(0.87,1)" font-size="8.9" fill="#111" text-anchor="end" font-weight="normal" font-style="normal"  stroke="#111" stroke-width="0.2">XTAL1</text>
<line x1="380.50" y1="225.92" x2="398.30" y2="225.92" stroke="#8c1f22" stroke-width="1.3" />
<text transform="translate(389.30,224.12) scale(0.86,1)" font-size="9.0" fill="#111" text-anchor="start" font-weight="normal" font-style="normal"  stroke="#111" stroke-width="0.15">12</text>
<text transform="translate(373.80,229.12) scale(0.87,1)" font-size="8.9" fill="#111" text-anchor="end" font-weight="normal" font-style="normal"  stroke="#111" stroke-width="0.2">XTAL2</text>
<line x1="380.50" y1="244.40" x2="398.30" y2="244.40" stroke="#8c1f22" stroke-width="1.3" />
<text transform="translate(389.30,242.60) scale(0.86,1)" font-size="9.0" fill="#111" text-anchor="start" font-weight="normal" font-style="normal"  stroke="#111" stroke-width="0.15">40</text>
<rect x="384.60" y="238.00" width="3.40" height="3.40" fill="#f0323f" stroke="none" stroke-width="1" />
<text transform="translate(375.70,247.60) scale(0.87,1)" font-size="8.9" fill="#111" text-anchor="end" font-weight="normal" font-style="normal"  stroke="#111" stroke-width="0.2">PA0/ADC0</text>
<line x1="380.50" y1="253.64" x2="398.30" y2="253.64" stroke="#8c1f22" stroke-width="1.3" />
<text transform="translate(389.30,251.84) scale(0.86,1)" font-size="9.0" fill="#111" text-anchor="start" font-weight="normal" font-style="normal"  stroke="#111" stroke-width="0.15">39</text>
<rect x="384.60" y="247.24" width="3.40" height="3.40" fill="#f0323f" stroke="none" stroke-width="1" />
<text transform="translate(375.70,256.84) scale(0.87,1)" font-size="8.9" fill="#111" text-anchor="end" font-weight="normal" font-style="normal"  stroke="#111" stroke-width="0.2">PA1/ADC1</text>
<line x1="380.50" y1="262.88" x2="398.30" y2="262.88" stroke="#8c1f22" stroke-width="1.3" />
<text transform="translate(389.30,261.08) scale(0.86,1)" font-size="9.0" fill="#111" text-anchor="start" font-weight="normal" font-style="normal"  stroke="#111" stroke-width="0.15">38</text>
<rect x="384.60" y="256.48" width="3.40" height="3.40" fill="#f0323f" stroke="none" stroke-width="1" />
<text transform="translate(375.70,266.08) scale(0.87,1)" font-size="8.9" fill="#111" text-anchor="end" font-weight="normal" font-style="normal"  stroke="#111" stroke-width="0.2">PA2/ADC2</text>
<line x1="380.50" y1="272.12" x2="398.30" y2="272.12" stroke="#8c1f22" stroke-width="1.3" />
<text transform="translate(389.30,270.32) scale(0.86,1)" font-size="9.0" fill="#111" text-anchor="start" font-weight="normal" font-style="normal"  stroke="#111" stroke-width="0.15">37</text>
<rect x="384.60" y="265.72" width="3.40" height="3.40" fill="#f0323f" stroke="none" stroke-width="1" />
<text transform="translate(375.70,275.32) scale(0.87,1)" font-size="8.9" fill="#111" text-anchor="end" font-weight="normal" font-style="normal"  stroke="#111" stroke-width="0.2">PA3/ADC3</text>
<line x1="380.50" y1="281.36" x2="398.30" y2="281.36" stroke="#8c1f22" stroke-width="1.3" />
<text transform="translate(389.30,279.56) scale(0.86,1)" font-size="9.0" fill="#111" text-anchor="start" font-weight="normal" font-style="normal"  stroke="#111" stroke-width="0.15">36</text>
<rect x="384.60" y="274.96" width="3.40" height="3.40" fill="#8c8c96" stroke="none" stroke-width="1" />
<text transform="translate(375.70,284.56) scale(0.87,1)" font-size="8.9" fill="#111" text-anchor="end" font-weight="normal" font-style="normal"  stroke="#111" stroke-width="0.2">PA4/ADC4</text>
<line x1="380.50" y1="290.60" x2="398.30" y2="290.60" stroke="#8c1f22" stroke-width="1.3" />
<text transform="translate(389.30,288.80) scale(0.86,1)" font-size="9.0" fill="#111" text-anchor="start" font-weight="normal" font-style="normal"  stroke="#111" stroke-width="0.15">35</text>
<rect x="384.60" y="284.20" width="3.40" height="3.40" fill="#8c8c96" stroke="none" stroke-width="1" />
<text transform="translate(375.70,293.80) scale(0.87,1)" font-size="8.9" fill="#111" text-anchor="end" font-weight="normal" font-style="normal"  stroke="#111" stroke-width="0.2">PA5/ADC5</text>
<line x1="380.50" y1="299.84" x2="398.30" y2="299.84" stroke="#8c1f22" stroke-width="1.3" />
<text transform="translate(389.30,298.04) scale(0.86,1)" font-size="9.0" fill="#111" text-anchor="start" font-weight="normal" font-style="normal"  stroke="#111" stroke-width="0.15">34</text>
<rect x="384.60" y="293.44" width="3.40" height="3.40" fill="#8c8c96" stroke="none" stroke-width="1" />
<text transform="translate(375.70,303.04) scale(0.87,1)" font-size="8.9" fill="#111" text-anchor="end" font-weight="normal" font-style="normal"  stroke="#111" stroke-width="0.2">PA6/ADC6</text>
<line x1="380.50" y1="309.08" x2="398.30" y2="309.08" stroke="#8c1f22" stroke-width="1.3" />
<text transform="translate(389.30,307.28) scale(0.86,1)" font-size="9.0" fill="#111" text-anchor="start" font-weight="normal" font-style="normal"  stroke="#111" stroke-width="0.15">33</text>
<rect x="384.60" y="302.68" width="3.40" height="3.40" fill="#8c8c96" stroke="none" stroke-width="1" />
<text transform="translate(375.70,312.28) scale(0.87,1)" font-size="8.9" fill="#111" text-anchor="end" font-weight="normal" font-style="normal"  stroke="#111" stroke-width="0.2">PA7/ADC7</text>
<line x1="380.50" y1="327.56" x2="398.30" y2="327.56" stroke="#8c1f22" stroke-width="1.3" />
<text transform="translate(389.30,325.76) scale(0.86,1)" font-size="9.0" fill="#111" text-anchor="start" font-weight="normal" font-style="normal"  stroke="#111" stroke-width="0.15">1</text>
<rect x="384.60" y="321.16" width="3.40" height="3.40" fill="#f0323f" stroke="none" stroke-width="1" />
<text transform="translate(375.70,330.76) scale(0.87,1)" font-size="8.9" fill="#111" text-anchor="end" font-weight="normal" font-style="normal"  stroke="#111" stroke-width="0.2">PB0/XCK/T0</text>
<line x1="380.50" y1="336.80" x2="398.30" y2="336.80" stroke="#8c1f22" stroke-width="1.3" />
<text transform="translate(389.30,335.00) scale(0.86,1)" font-size="9.0" fill="#111" text-anchor="start" font-weight="normal" font-style="normal"  stroke="#111" stroke-width="0.15">2</text>
<rect x="384.60" y="330.40" width="3.40" height="3.40" fill="#3a4cf0" stroke="none" stroke-width="1" />
<text transform="translate(375.70,340.00) scale(0.87,1)" font-size="8.9" fill="#111" text-anchor="end" font-weight="normal" font-style="normal"  stroke="#111" stroke-width="0.2">PB1/T1</text>
<line x1="380.50" y1="346.04" x2="398.30" y2="346.04" stroke="#8c1f22" stroke-width="1.3" />
<text transform="translate(389.30,344.24) scale(0.86,1)" font-size="9.0" fill="#111" text-anchor="start" font-weight="normal" font-style="normal"  stroke="#111" stroke-width="0.15">3</text>
<rect x="384.60" y="339.64" width="3.40" height="3.40" fill="#3a4cf0" stroke="none" stroke-width="1" />
<text transform="translate(375.70,349.24) scale(0.87,1)" font-size="8.9" fill="#111" text-anchor="end" font-weight="normal" font-style="normal"  stroke="#111" stroke-width="0.2">PB2/INT2/AIN0</text>
<line x1="380.50" y1="355.28" x2="398.30" y2="355.28" stroke="#8c1f22" stroke-width="1.3" />
<text transform="translate(389.30,353.48) scale(0.86,1)" font-size="9.0" fill="#111" text-anchor="start" font-weight="normal" font-style="normal"  stroke="#111" stroke-width="0.15">4</text>
<rect x="384.60" y="348.88" width="3.40" height="3.40" fill="#3a4cf0" stroke="none" stroke-width="1" />
<text transform="translate(375.70,358.48) scale(0.87,1)" font-size="8.9" fill="#111" text-anchor="end" font-weight="normal" font-style="normal"  stroke="#111" stroke-width="0.2">PB3/OC0/AIN1</text>
<line x1="380.50" y1="364.52" x2="398.30" y2="364.52" stroke="#8c1f22" stroke-width="1.3" />
<text transform="translate(389.30,362.72) scale(0.86,1)" font-size="9.0" fill="#111" text-anchor="start" font-weight="normal" font-style="normal"  stroke="#111" stroke-width="0.15">5</text>
<rect x="384.60" y="358.12" width="3.40" height="3.40" fill="#3a4cf0" stroke="none" stroke-width="1" />
<text transform="translate(375.70,367.72) scale(0.87,1)" font-size="8.9" fill="#111" text-anchor="end" font-weight="normal" font-style="normal"  stroke="#111" stroke-width="0.2">PB4/SS</text>
<line x1="365.60" y1="360.12" x2="375.60" y2="360.12" stroke="#111" stroke-width="0.8" />
<line x1="380.50" y1="373.76" x2="398.30" y2="373.76" stroke="#8c1f22" stroke-width="1.3" />
<text transform="translate(389.30,371.96) scale(0.86,1)" font-size="9.0" fill="#111" text-anchor="start" font-weight="normal" font-style="normal"  stroke="#111" stroke-width="0.15">6</text>
<rect x="384.60" y="367.36" width="3.40" height="3.40" fill="#3a4cf0" stroke="none" stroke-width="1" />
<text transform="translate(375.70,376.96) scale(0.87,1)" font-size="8.9" fill="#111" text-anchor="end" font-weight="normal" font-style="normal"  stroke="#111" stroke-width="0.2">PB5/MOSI</text>
<line x1="380.50" y1="383.00" x2="398.30" y2="383.00" stroke="#8c1f22" stroke-width="1.3" />
<text transform="translate(389.30,381.20) scale(0.86,1)" font-size="9.0" fill="#111" text-anchor="start" font-weight="normal" font-style="normal"  stroke="#111" stroke-width="0.15">7</text>
<rect x="384.60" y="376.60" width="3.40" height="3.40" fill="#f0323f" stroke="none" stroke-width="1" />
<text transform="translate(375.70,386.20) scale(0.87,1)" font-size="8.9" fill="#111" text-anchor="end" font-weight="normal" font-style="normal"  stroke="#111" stroke-width="0.2">PB6/MISO</text>
<line x1="380.50" y1="392.24" x2="398.30" y2="392.24" stroke="#8c1f22" stroke-width="1.3" />
<text transform="translate(389.30,390.44) scale(0.86,1)" font-size="9.0" fill="#111" text-anchor="start" font-weight="normal" font-style="normal"  stroke="#111" stroke-width="0.15">8</text>
<rect x="384.60" y="385.84" width="3.40" height="3.40" fill="#3a4cf0" stroke="none" stroke-width="1" />
<text transform="translate(375.70,395.44) scale(0.87,1)" font-size="8.9" fill="#111" text-anchor="end" font-weight="normal" font-style="normal"  stroke="#111" stroke-width="0.2">PB7/SCK</text>
<line x1="385.70" y1="299.60" x2="392.90" y2="299.60" stroke="#2030c8" stroke-width="0.9" />
<line x1="389.30" y1="295.80" x2="389.30" y2="303.40" stroke="#2030c8" stroke-width="0.9" />
<polyline points="387.00,299.60 389.30,297.00 391.60,299.60 389.30,302.20 387.00,299.60" fill="none" stroke="#2030c8" stroke-width="0.8" />
<polyline points="398.30,244.40 407.60,244.40 407.60,235.40 490.80,235.40 490.80,249.00" fill="none" stroke="#1e5c20" stroke-width="1.2" />
<polyline points="398.30,253.64 417.00,253.64 417.00,244.60 537.60,244.60 537.60,249.00" fill="none" stroke="#1e5c20" stroke-width="1.2" />
<polyline points="398.30,262.88 435.00,262.88 435.00,198.20 510.10,198.20 510.10,189.50" fill="none" stroke="#f2462c" stroke-width="1.2" />
<polyline points="398.30,272.12 444.80,272.12 444.80,207.20 537.50,207.20 537.50,189.50" fill="none" stroke="#f2462c" stroke-width="1.2" />
<polyline points="398.30,327.56 630.08,327.56 630.08,226.00" fill="none" stroke="#1e5c20" stroke-width="1.2" />
<polyline points="398.30,336.80 639.35,336.80 639.35,226.00" fill="none" stroke="#1e5c20" stroke-width="1.2" />
<polyline points="398.30,346.04 648.62,346.04 648.62,226.00" fill="none" stroke="#1e5c20" stroke-width="1.2" />
<polyline points="398.30,364.52 704.24,364.52 704.24,226.00" fill="none" stroke="#1e5c20" stroke-width="1.2" />
<polyline points="398.30,373.76 713.51,373.76 713.51,226.00" fill="none" stroke="#1e5c20" stroke-width="1.2" />
<polyline points="398.30,383.00 722.78,383.00 722.78,226.00" fill="none" stroke="#1e5c20" stroke-width="1.2" />
<polyline points="398.30,392.24 732.05,392.24 732.05,226.00" fill="none" stroke="#1e5c20" stroke-width="1.2" />
<rect x="343.30" y="143.30" width="147.40" height="36.00" fill="#d1cdb3" stroke="#8c1f22" stroke-width="1.3" />
<rect x="369.40" y="146.50" width="118.40" height="28.60" fill="#000" stroke="#6a1010" stroke-width="1.4" />
<line x1="325.00" y1="152.00" x2="343.30" y2="152.00" stroke="#f2462c" stroke-width="1.2" />
<line x1="325.00" y1="161.30" x2="343.30" y2="161.30" stroke="#8c1f22" stroke-width="1.3" />
<line x1="325.00" y1="170.70" x2="343.30" y2="170.70" stroke="#8c1f22" stroke-width="1.3" />
<polyline points="343.50,149.60 346.30,152.00 343.50,154.40" fill="none" stroke="#8c1f22" stroke-width="0.9" />
<rect x="331.90" y="144.40" width="4.30" height="4.30" fill="#f0323f" stroke="none" stroke-width="1" />
<rect x="331.90" y="154.00" width="4.30" height="4.30" fill="#8c8c96" stroke="none" stroke-width="1" />
<rect x="331.90" y="163.30" width="4.30" height="4.30" fill="#8c8c96" stroke="none" stroke-width="1" />
<text transform="translate(347.80,154.70) scale(0.86,1)" font-size="9.0" fill="#111" text-anchor="start" font-weight="normal" font-style="normal"  stroke="#111" stroke-width="0.15">CLK</text>
<text transform="translate(347.80,164.40) scale(0.86,1)" font-size="9.0" fill="#111" text-anchor="start" font-weight="normal" font-style="normal"  stroke="#111" stroke-width="0.15">CE</text>
<text transform="translate(347.80,173.70) scale(0.86,1)" font-size="9.0" fill="#111" text-anchor="start" font-weight="normal" font-style="normal"  stroke="#111" stroke-width="0.15">RST</text>
<line x1="375.33" y1="160.60" x2="382.40" y2="160.60" stroke="#3a0606" stroke-width="1.5" stroke-linecap="round"/>
<g filter="url(#glow)" opacity="0.55">
<line x1="376.07" y1="150.40" x2="383.51" y2="150.40" stroke="#ff1a1a" stroke-width="2.4" stroke-linecap="round"/>
<line x1="384.33" y1="151.62" x2="383.59" y2="159.78" stroke="#ff1a1a" stroke-width="2.4" stroke-linecap="round"/>
<line x1="383.44" y1="161.42" x2="382.71" y2="169.58" stroke="#ff1a1a" stroke-width="2.4" stroke-linecap="round"/>
<line x1="374.23" y1="170.80" x2="381.67" y2="170.80" stroke="#ff1a1a" stroke-width="2.4" stroke-linecap="round"/>
<line x1="374.14" y1="161.42" x2="373.41" y2="169.58" stroke="#ff1a1a" stroke-width="2.4" stroke-linecap="round"/>
<line x1="375.03" y1="151.62" x2="374.29" y2="159.78" stroke="#ff1a1a" stroke-width="2.4" stroke-linecap="round"/>
</g>
<line x1="376.07" y1="150.40" x2="383.51" y2="150.40" stroke="#ea1c1c" stroke-width="1.35" stroke-linecap="round"/>
<line x1="384.33" y1="151.62" x2="383.59" y2="159.78" stroke="#ea1c1c" stroke-width="1.35" stroke-linecap="round"/>
<line x1="383.44" y1="161.42" x2="382.71" y2="169.58" stroke="#ea1c1c" stroke-width="1.35" stroke-linecap="round"/>
<line x1="374.23" y1="170.80" x2="381.67" y2="170.80" stroke="#ea1c1c" stroke-width="1.35" stroke-linecap="round"/>
<line x1="374.14" y1="161.42" x2="373.41" y2="169.58" stroke="#ea1c1c" stroke-width="1.35" stroke-linecap="round"/>
<line x1="375.03" y1="151.62" x2="374.29" y2="159.78" stroke="#ea1c1c" stroke-width="1.35" stroke-linecap="round"/>
<line x1="389.41" y1="160.60" x2="396.48" y2="160.60" stroke="#3a0606" stroke-width="1.5" stroke-linecap="round"/>
<g filter="url(#glow)" opacity="0.55">
<line x1="390.15" y1="150.40" x2="397.59" y2="150.40" stroke="#ff1a1a" stroke-width="2.4" stroke-linecap="round"/>
<line x1="398.41" y1="151.62" x2="397.67" y2="159.78" stroke="#ff1a1a" stroke-width="2.4" stroke-linecap="round"/>
<line x1="397.52" y1="161.42" x2="396.79" y2="169.58" stroke="#ff1a1a" stroke-width="2.4" stroke-linecap="round"/>
<line x1="388.31" y1="170.80" x2="395.75" y2="170.80" stroke="#ff1a1a" stroke-width="2.4" stroke-linecap="round"/>
<line x1="388.22" y1="161.42" x2="387.49" y2="169.58" stroke="#ff1a1a" stroke-width="2.4" stroke-linecap="round"/>
<line x1="389.11" y1="151.62" x2="388.37" y2="159.78" stroke="#ff1a1a" stroke-width="2.4" stroke-linecap="round"/>
</g>
<line x1="390.15" y1="150.40" x2="397.59" y2="150.40" stroke="#ea1c1c" stroke-width="1.35" stroke-linecap="round"/>
<line x1="398.41" y1="151.62" x2="397.67" y2="159.78" stroke="#ea1c1c" stroke-width="1.35" stroke-linecap="round"/>
<line x1="397.52" y1="161.42" x2="396.79" y2="169.58" stroke="#ea1c1c" stroke-width="1.35" stroke-linecap="round"/>
<line x1="388.31" y1="170.80" x2="395.75" y2="170.80" stroke="#ea1c1c" stroke-width="1.35" stroke-linecap="round"/>
<line x1="388.22" y1="161.42" x2="387.49" y2="169.58" stroke="#ea1c1c" stroke-width="1.35" stroke-linecap="round"/>
<line x1="389.11" y1="151.62" x2="388.37" y2="159.78" stroke="#ea1c1c" stroke-width="1.35" stroke-linecap="round"/>
<line x1="403.49" y1="160.60" x2="410.56" y2="160.60" stroke="#3a0606" stroke-width="1.5" stroke-linecap="round"/>
<g filter="url(#glow)" opacity="0.55">
<line x1="404.23" y1="150.40" x2="411.67" y2="150.40" stroke="#ff1a1a" stroke-width="2.4" stroke-linecap="round"/>
<line x1="412.49" y1="151.62" x2="411.75" y2="159.78" stroke="#ff1a1a" stroke-width="2.4" stroke-linecap="round"/>
<line x1="411.60" y1="161.42" x2="410.87" y2="169.58" stroke="#ff1a1a" stroke-width="2.4" stroke-linecap="round"/>
<line x1="402.39" y1="170.80" x2="409.83" y2="170.80" stroke="#ff1a1a" stroke-width="2.4" stroke-linecap="round"/>
<line x1="402.30" y1="161.42" x2="401.57" y2="169.58" stroke="#ff1a1a" stroke-width="2.4" stroke-linecap="round"/>
<line x1="403.19" y1="151.62" x2="402.45" y2="159.78" stroke="#ff1a1a" stroke-width="2.4" stroke-linecap="round"/>
</g>
<line x1="404.23" y1="150.40" x2="411.67" y2="150.40" stroke="#ea1c1c" stroke-width="1.35" stroke-linecap="round"/>
<line x1="412.49" y1="151.62" x2="411.75" y2="159.78" stroke="#ea1c1c" stroke-width="1.35" stroke-linecap="round"/>
<line x1="411.60" y1="161.42" x2="410.87" y2="169.58" stroke="#ea1c1c" stroke-width="1.35" stroke-linecap="round"/>
<line x1="402.39" y1="170.80" x2="409.83" y2="170.80" stroke="#ea1c1c" stroke-width="1.35" stroke-linecap="round"/>
<line x1="402.30" y1="161.42" x2="401.57" y2="169.58" stroke="#ea1c1c" stroke-width="1.35" stroke-linecap="round"/>
<line x1="403.19" y1="151.62" x2="402.45" y2="159.78" stroke="#ea1c1c" stroke-width="1.35" stroke-linecap="round"/>
<line x1="417.57" y1="160.60" x2="424.64" y2="160.60" stroke="#3a0606" stroke-width="1.5" stroke-linecap="round"/>
<g filter="url(#glow)" opacity="0.55">
<line x1="418.31" y1="150.40" x2="425.75" y2="150.40" stroke="#ff1a1a" stroke-width="2.4" stroke-linecap="round"/>
<line x1="426.57" y1="151.62" x2="425.83" y2="159.78" stroke="#ff1a1a" stroke-width="2.4" stroke-linecap="round"/>
<line x1="425.68" y1="161.42" x2="424.95" y2="169.58" stroke="#ff1a1a" stroke-width="2.4" stroke-linecap="round"/>
<line x1="416.47" y1="170.80" x2="423.91" y2="170.80" stroke="#ff1a1a" stroke-width="2.4" stroke-linecap="round"/>
<line x1="416.38" y1="161.42" x2="415.65" y2="169.58" stroke="#ff1a1a" stroke-width="2.4" stroke-linecap="round"/>
<line x1="417.27" y1="151.62" x2="416.53" y2="159.78" stroke="#ff1a1a" stroke-width="2.4" stroke-linecap="round"/>
</g>
<line x1="418.31" y1="150.40" x2="425.75" y2="150.40" stroke="#ea1c1c" stroke-width="1.35" stroke-linecap="round"/>
<line x1="426.57" y1="151.62" x2="425.83" y2="159.78" stroke="#ea1c1c" stroke-width="1.35" stroke-linecap="round"/>
<line x1="425.68" y1="161.42" x2="424.95" y2="169.58" stroke="#ea1c1c" stroke-width="1.35" stroke-linecap="round"/>
<line x1="416.47" y1="170.80" x2="423.91" y2="170.80" stroke="#ea1c1c" stroke-width="1.35" stroke-linecap="round"/>
<line x1="416.38" y1="161.42" x2="415.65" y2="169.58" stroke="#ea1c1c" stroke-width="1.35" stroke-linecap="round"/>
<line x1="417.27" y1="151.62" x2="416.53" y2="159.78" stroke="#ea1c1c" stroke-width="1.35" stroke-linecap="round"/>
<line x1="432.39" y1="150.40" x2="439.83" y2="150.40" stroke="#3a0606" stroke-width="1.5" stroke-linecap="round"/>
<line x1="430.55" y1="170.80" x2="437.99" y2="170.80" stroke="#3a0606" stroke-width="1.5" stroke-linecap="round"/>
<line x1="430.46" y1="161.42" x2="429.73" y2="169.58" stroke="#3a0606" stroke-width="1.5" stroke-linecap="round"/>
<line x1="431.35" y1="151.62" x2="430.61" y2="159.78" stroke="#3a0606" stroke-width="1.5" stroke-linecap="round"/>
<line x1="431.65" y1="160.60" x2="438.72" y2="160.60" stroke="#3a0606" stroke-width="1.5" stroke-linecap="round"/>
<g filter="url(#glow)" opacity="0.55">
<line x1="440.65" y1="151.62" x2="439.91" y2="159.78" stroke="#ff1a1a" stroke-width="2.4" stroke-linecap="round"/>
<line x1="439.76" y1="161.42" x2="439.03" y2="169.58" stroke="#ff1a1a" stroke-width="2.4" stroke-linecap="round"/>
</g>
<line x1="440.65" y1="151.62" x2="439.91" y2="159.78" stroke="#ea1c1c" stroke-width="1.35" stroke-linecap="round"/>
<line x1="439.76" y1="161.42" x2="439.03" y2="169.58" stroke="#ea1c1c" stroke-width="1.35" stroke-linecap="round"/>
<line x1="444.54" y1="161.42" x2="443.81" y2="169.58" stroke="#3a0606" stroke-width="1.5" stroke-linecap="round"/>
<g filter="url(#glow)" opacity="0.55">
<line x1="446.47" y1="150.40" x2="453.91" y2="150.40" stroke="#ff1a1a" stroke-width="2.4" stroke-linecap="round"/>
<line x1="454.73" y1="151.62" x2="453.99" y2="159.78" stroke="#ff1a1a" stroke-width="2.4" stroke-linecap="round"/>
<line x1="453.84" y1="161.42" x2="453.11" y2="169.58" stroke="#ff1a1a" stroke-width="2.4" stroke-linecap="round"/>
<line x1="444.63" y1="170.80" x2="452.07" y2="170.80" stroke="#ff1a1a" stroke-width="2.4" stroke-linecap="round"/>
<line x1="445.43" y1="151.62" x2="444.69" y2="159.78" stroke="#ff1a1a" stroke-width="2.4" stroke-linecap="round"/>
<line x1="445.73" y1="160.60" x2="452.80" y2="160.60" stroke="#ff1a1a" stroke-width="2.4" stroke-linecap="round"/>
</g>
<line x1="446.47" y1="150.40" x2="453.91" y2="150.40" stroke="#ea1c1c" stroke-width="1.35" stroke-linecap="round"/>
<line x1="454.73" y1="151.62" x2="453.99" y2="159.78" stroke="#ea1c1c" stroke-width="1.35" stroke-linecap="round"/>
<line x1="453.84" y1="161.42" x2="453.11" y2="169.58" stroke="#ea1c1c" stroke-width="1.35" stroke-linecap="round"/>
<line x1="444.63" y1="170.80" x2="452.07" y2="170.80" stroke="#ea1c1c" stroke-width="1.35" stroke-linecap="round"/>
<line x1="445.43" y1="151.62" x2="444.69" y2="159.78" stroke="#ea1c1c" stroke-width="1.35" stroke-linecap="round"/>
<line x1="445.73" y1="160.60" x2="452.80" y2="160.60" stroke="#ea1c1c" stroke-width="1.35" stroke-linecap="round"/>
<line x1="468.81" y1="151.62" x2="468.07" y2="159.78" stroke="#3a0606" stroke-width="1.5" stroke-linecap="round"/>
<line x1="458.62" y1="161.42" x2="457.89" y2="169.58" stroke="#3a0606" stroke-width="1.5" stroke-linecap="round"/>
<g filter="url(#glow)" opacity="0.55">
<line x1="460.55" y1="150.40" x2="467.99" y2="150.40" stroke="#ff1a1a" stroke-width="2.4" stroke-linecap="round"/>
<line x1="467.92" y1="161.42" x2="467.19" y2="169.58" stroke="#ff1a1a" stroke-width="2.4" stroke-linecap="round"/>
<line x1="458.71" y1="170.80" x2="466.15" y2="170.80" stroke="#ff1a1a" stroke-width="2.4" stroke-linecap="round"/>
<line x1="459.51" y1="151.62" x2="458.77" y2="159.78" stroke="#ff1a1a" stroke-width="2.4" stroke-linecap="round"/>
<line x1="459.81" y1="160.60" x2="466.88" y2="160.60" stroke="#ff1a1a" stroke-width="2.4" stroke-linecap="round"/>
</g>
<line x1="460.55" y1="150.40" x2="467.99" y2="150.40" stroke="#ea1c1c" stroke-width="1.35" stroke-linecap="round"/>
<line x1="467.92" y1="161.42" x2="467.19" y2="169.58" stroke="#ea1c1c" stroke-width="1.35" stroke-linecap="round"/>
<line x1="458.71" y1="170.80" x2="466.15" y2="170.80" stroke="#ea1c1c" stroke-width="1.35" stroke-linecap="round"/>
<line x1="459.51" y1="151.62" x2="458.77" y2="159.78" stroke="#ea1c1c" stroke-width="1.35" stroke-linecap="round"/>
<line x1="459.81" y1="160.60" x2="466.88" y2="160.60" stroke="#ea1c1c" stroke-width="1.35" stroke-linecap="round"/>
<line x1="472.70" y1="161.42" x2="471.97" y2="169.58" stroke="#3a0606" stroke-width="1.5" stroke-linecap="round"/>
<line x1="473.59" y1="151.62" x2="472.85" y2="159.78" stroke="#3a0606" stroke-width="1.5" stroke-linecap="round"/>
<g filter="url(#glow)" opacity="0.55">
<line x1="474.63" y1="150.40" x2="482.07" y2="150.40" stroke="#ff1a1a" stroke-width="2.4" stroke-linecap="round"/>
<line x1="482.89" y1="151.62" x2="482.15" y2="159.78" stroke="#ff1a1a" stroke-width="2.4" stroke-linecap="round"/>
<line x1="482.00" y1="161.42" x2="481.27" y2="169.58" stroke="#ff1a1a" stroke-width="2.4" stroke-linecap="round"/>
<line x1="472.79" y1="170.80" x2="480.23" y2="170.80" stroke="#ff1a1a" stroke-width="2.4" stroke-linecap="round"/>
<line x1="473.89" y1="160.60" x2="480.96" y2="160.60" stroke="#ff1a1a" stroke-width="2.4" stroke-linecap="round"/>
</g>
<line x1="474.63" y1="150.40" x2="482.07" y2="150.40" stroke="#ea1c1c" stroke-width="1.35" stroke-linecap="round"/>
<line x1="482.89" y1="151.62" x2="482.15" y2="159.78" stroke="#ea1c1c" stroke-width="1.35" stroke-linecap="round"/>
<line x1="482.00" y1="161.42" x2="481.27" y2="169.58" stroke="#ea1c1c" stroke-width="1.35" stroke-linecap="round"/>
<line x1="472.79" y1="170.80" x2="480.23" y2="170.80" stroke="#ea1c1c" stroke-width="1.35" stroke-linecap="round"/>
<line x1="473.89" y1="160.60" x2="480.96" y2="160.60" stroke="#ea1c1c" stroke-width="1.35" stroke-linecap="round"/>
<rect x="575.00" y="133.30" width="180.00" height="73.60" fill="#d1cdb3" stroke="#8c1f22" stroke-width="1.6" />
<text transform="translate(573.60,120.40) scale(0.885,1)" font-size="12.3" fill="#111" text-anchor="start" font-weight="normal" font-style="normal"  stroke="#111" stroke-width="0.12">LCD1</text>
<text transform="translate(574.20,130.40) scale(0.86,1)" font-size="8.7" fill="#111" text-anchor="start" font-weight="normal" font-style="normal"  stroke="#111" stroke-width="0.2">LM016L</text>
<text transform="translate(574.60,140.30) scale(0.78,1)" font-size="8.9" fill="#a8a8a0" text-anchor="start" font-weight="normal" font-style="normal" >&lt;TEXT&gt;</text>
<rect x="583.40" y="140.20" width="170.00" height="41.80" fill="#9ab513" stroke="#1a1a08" stroke-width="1.3" />
<path d="M592.40,145.90h1.37v1.48h-1.37zM593.77,145.90h1.37v1.48h-1.37zM595.14,145.90h1.37v1.48h-1.37zM596.51,145.90h1.37v1.48h-1.37zM592.40,147.38h1.37v1.48h-1.37zM597.88,147.38h1.37v1.48h-1.37zM592.40,148.86h1.37v1.48h-1.37zM597.88,148.86h1.37v1.48h-1.37zM592.40,150.34h1.37v1.48h-1.37zM593.77,150.34h1.37v1.48h-1.37zM595.14,150.34h1.37v1.48h-1.37zM596.51,150.34h1.37v1.48h-1.37zM592.40,151.82h1.37v1.48h-1.37zM592.40,153.30h1.37v1.48h-1.37zM592.40,154.78h1.37v1.48h-1.37zM601.65,145.90h1.37v1.48h-1.37zM607.13,145.90h1.37v1.48h-1.37zM601.65,147.38h1.37v1.48h-1.37zM607.13,147.38h1.37v1.48h-1.37zM601.65,148.86h1.37v1.48h-1.37zM607.13,148.86h1.37v1.48h-1.37zM601.65,150.34h1.37v1.48h-1.37zM604.39,150.34h1.37v1.48h-1.37zM607.13,150.34h1.37v1.48h-1.37zM601.65,151.82h1.37v1.48h-1.37zM604.39,151.82h1.37v1.48h-1.37zM607.13,151.82h1.37v1.48h-1.37zM601.65,153.30h1.37v1.48h-1.37zM604.39,153.30h1.37v1.48h-1.37zM607.13,153.30h1.37v1.48h-1.37zM603.02,154.78h1.37v1.48h-1.37zM605.76,154.78h1.37v1.48h-1.37zM610.90,145.90h1.37v1.48h-1.37zM616.38,145.90h1.37v1.48h-1.37zM610.90,147.38h1.37v1.48h-1.37zM612.27,147.38h1.37v1.48h-1.37zM615.01,147.38h1.37v1.48h-1.37zM616.38,147.38h1.37v1.48h-1.37zM610.90,148.86h1.37v1.48h-1.37zM613.64,148.86h1.37v1.48h-1.37zM616.38,148.86h1.37v1.48h-1.37zM610.90,150.34h1.37v1.48h-1.37zM613.64,150.34h1.37v1.48h-1.37zM616.38,150.34h1.37v1.48h-1.37zM610.90,151.82h1.37v1.48h-1.37zM616.38,151.82h1.37v1.48h-1.37zM610.90,153.30h1.37v1.48h-1.37zM616.38,153.30h1.37v1.48h-1.37zM610.90,154.78h1.37v1.48h-1.37zM616.38,154.78h1.37v1.48h-1.37zM630.77,145.90h1.37v1.48h-1.37zM630.77,147.38h1.37v1.48h-1.37zM629.40,148.86h1.37v1.48h-1.37zM630.77,148.86h1.37v1.48h-1.37zM632.14,148.86h1.37v1.48h-1.37zM630.77,150.34h1.37v1.48h-1.37zM630.77,151.82h1.37v1.48h-1.37zM630.77,153.30h1.37v1.48h-1.37zM634.88,153.30h1.37v1.48h-1.37zM632.14,154.78h1.37v1.48h-1.37zM633.51,154.78h1.37v1.48h-1.37zM640.02,148.86h1.37v1.48h-1.37zM641.39,148.86h1.37v1.48h-1.37zM642.76,148.86h1.37v1.48h-1.37zM638.65,150.34h1.37v1.48h-1.37zM644.13,150.34h1.37v1.48h-1.37zM638.65,151.82h1.37v1.48h-1.37zM640.02,151.82h1.37v1.48h-1.37zM641.39,151.82h1.37v1.48h-1.37zM642.76,151.82h1.37v1.48h-1.37zM644.13,151.82h1.37v1.48h-1.37zM638.65,153.30h1.37v1.48h-1.37zM640.02,154.78h1.37v1.48h-1.37zM641.39,154.78h1.37v1.48h-1.37zM642.76,154.78h1.37v1.48h-1.37zM649.27,148.86h1.37v1.48h-1.37zM650.64,148.86h1.37v1.48h-1.37zM652.01,148.86h1.37v1.48h-1.37zM647.90,150.34h1.37v1.48h-1.37zM649.27,151.82h1.37v1.48h-1.37zM650.64,151.82h1.37v1.48h-1.37zM652.01,151.82h1.37v1.48h-1.37zM653.38,153.30h1.37v1.48h-1.37zM647.90,154.78h1.37v1.48h-1.37zM649.27,154.78h1.37v1.48h-1.37zM650.64,154.78h1.37v1.48h-1.37zM652.01,154.78h1.37v1.48h-1.37zM658.52,145.90h1.37v1.48h-1.37zM658.52,147.38h1.37v1.48h-1.37zM657.15,148.86h1.37v1.48h-1.37zM658.52,148.86h1.37v1.48h-1.37zM659.89,148.86h1.37v1.48h-1.37zM658.52,150.34h1.37v1.48h-1.37zM658.52,151.82h1.37v1.48h-1.37zM658.52,153.30h1.37v1.48h-1.37zM662.63,153.30h1.37v1.48h-1.37zM659.89,154.78h1.37v1.48h-1.37zM661.26,154.78h1.37v1.48h-1.37z" fill="#1c2304" stroke="#1c2304" stroke-width="0.25"/>
<path d="M593.77,164.30h1.37v1.48h-1.37zM595.14,164.30h1.37v1.48h-1.37zM596.51,164.30h1.37v1.48h-1.37zM592.40,165.78h1.37v1.48h-1.37zM597.88,165.78h1.37v1.48h-1.37zM592.40,167.26h1.37v1.48h-1.37zM597.88,167.26h1.37v1.48h-1.37zM592.40,168.74h1.37v1.48h-1.37zM597.88,168.74h1.37v1.48h-1.37zM592.40,170.22h1.37v1.48h-1.37zM597.88,170.22h1.37v1.48h-1.37zM592.40,171.70h1.37v1.48h-1.37zM597.88,171.70h1.37v1.48h-1.37zM593.77,173.18h1.37v1.48h-1.37zM595.14,173.18h1.37v1.48h-1.37zM596.51,173.18h1.37v1.48h-1.37zM603.02,164.30h1.37v1.48h-1.37zM604.39,164.30h1.37v1.48h-1.37zM605.76,164.30h1.37v1.48h-1.37zM601.65,165.78h1.37v1.48h-1.37zM607.13,165.78h1.37v1.48h-1.37zM601.65,167.26h1.37v1.48h-1.37zM601.65,168.74h1.37v1.48h-1.37zM601.65,170.22h1.37v1.48h-1.37zM601.65,171.70h1.37v1.48h-1.37zM607.13,171.70h1.37v1.48h-1.37zM603.02,173.18h1.37v1.48h-1.37zM604.39,173.18h1.37v1.48h-1.37zM605.76,173.18h1.37v1.48h-1.37zM610.90,164.30h1.37v1.48h-1.37zM612.27,164.30h1.37v1.48h-1.37zM613.64,164.30h1.37v1.48h-1.37zM615.01,164.30h1.37v1.48h-1.37zM610.90,165.78h1.37v1.48h-1.37zM616.38,165.78h1.37v1.48h-1.37zM610.90,167.26h1.37v1.48h-1.37zM616.38,167.26h1.37v1.48h-1.37zM610.90,168.74h1.37v1.48h-1.37zM612.27,168.74h1.37v1.48h-1.37zM613.64,168.74h1.37v1.48h-1.37zM615.01,168.74h1.37v1.48h-1.37zM610.90,170.22h1.37v1.48h-1.37zM613.64,170.22h1.37v1.48h-1.37zM610.90,171.70h1.37v1.48h-1.37zM615.01,171.70h1.37v1.48h-1.37zM610.90,173.18h1.37v1.48h-1.37zM616.38,173.18h1.37v1.48h-1.37zM622.89,164.30h1.37v1.48h-1.37zM621.52,165.78h1.37v1.48h-1.37zM622.89,165.78h1.37v1.48h-1.37zM622.89,167.26h1.37v1.48h-1.37zM622.89,168.74h1.37v1.48h-1.37zM622.89,170.22h1.37v1.48h-1.37zM622.89,171.70h1.37v1.48h-1.37zM621.52,173.18h1.37v1.48h-1.37zM622.89,173.18h1.37v1.48h-1.37zM624.26,173.18h1.37v1.48h-1.37zM630.77,164.30h1.37v1.48h-1.37zM632.14,164.30h1.37v1.48h-1.37zM633.51,164.30h1.37v1.48h-1.37zM629.40,165.78h1.37v1.48h-1.37zM634.88,165.78h1.37v1.48h-1.37zM629.40,167.26h1.37v1.48h-1.37zM634.88,167.26h1.37v1.48h-1.37zM629.40,168.74h1.37v1.48h-1.37zM634.88,168.74h1.37v1.48h-1.37zM629.40,170.22h1.37v1.48h-1.37zM630.77,170.22h1.37v1.48h-1.37zM632.14,170.22h1.37v1.48h-1.37zM633.51,170.22h1.37v1.48h-1.37zM634.88,170.22h1.37v1.48h-1.37zM629.40,171.70h1.37v1.48h-1.37zM634.88,171.70h1.37v1.48h-1.37zM629.40,173.18h1.37v1.48h-1.37zM634.88,173.18h1.37v1.48h-1.37zM647.90,167.26h1.37v1.48h-1.37zM649.27,167.26h1.37v1.48h-1.37zM650.64,167.26h1.37v1.48h-1.37zM652.01,167.26h1.37v1.48h-1.37zM653.38,167.26h1.37v1.48h-1.37zM647.90,170.22h1.37v1.48h-1.37zM649.27,170.22h1.37v1.48h-1.37zM650.64,170.22h1.37v1.48h-1.37zM652.01,170.22h1.37v1.48h-1.37zM653.38,170.22h1.37v1.48h-1.37zM669.14,164.30h1.37v1.48h-1.37zM667.77,165.78h1.37v1.48h-1.37zM669.14,165.78h1.37v1.48h-1.37zM669.14,167.26h1.37v1.48h-1.37zM669.14,168.74h1.37v1.48h-1.37zM669.14,170.22h1.37v1.48h-1.37zM669.14,171.70h1.37v1.48h-1.37zM667.77,173.18h1.37v1.48h-1.37zM669.14,173.18h1.37v1.48h-1.37zM670.51,173.18h1.37v1.48h-1.37zM677.02,164.30h1.37v1.48h-1.37zM678.39,164.30h1.37v1.48h-1.37zM679.76,164.30h1.37v1.48h-1.37zM675.65,165.78h1.37v1.48h-1.37zM681.13,165.78h1.37v1.48h-1.37zM675.65,167.26h1.37v1.48h-1.37zM679.76,167.26h1.37v1.48h-1.37zM681.13,167.26h1.37v1.48h-1.37zM675.65,168.74h1.37v1.48h-1.37zM678.39,168.74h1.37v1.48h-1.37zM681.13,168.74h1.37v1.48h-1.37zM675.65,170.22h1.37v1.48h-1.37zM677.02,170.22h1.37v1.48h-1.37zM681.13,170.22h1.37v1.48h-1.37zM675.65,171.70h1.37v1.48h-1.37zM681.13,171.70h1.37v1.48h-1.37zM677.02,173.18h1.37v1.48h-1.37zM678.39,173.18h1.37v1.48h-1.37zM679.76,173.18h1.37v1.48h-1.37zM686.27,164.30h1.37v1.48h-1.37zM687.64,164.30h1.37v1.48h-1.37zM689.01,164.30h1.37v1.48h-1.37zM684.90,165.78h1.37v1.48h-1.37zM690.38,165.78h1.37v1.48h-1.37zM690.38,167.26h1.37v1.48h-1.37zM689.01,168.74h1.37v1.48h-1.37zM687.64,170.22h1.37v1.48h-1.37zM686.27,171.70h1.37v1.48h-1.37zM684.90,173.18h1.37v1.48h-1.37zM686.27,173.18h1.37v1.48h-1.37zM687.64,173.18h1.37v1.48h-1.37zM689.01,173.18h1.37v1.48h-1.37zM690.38,173.18h1.37v1.48h-1.37zM698.26,164.30h1.37v1.48h-1.37zM696.89,165.78h1.37v1.48h-1.37zM698.26,165.78h1.37v1.48h-1.37zM695.52,167.26h1.37v1.48h-1.37zM698.26,167.26h1.37v1.48h-1.37zM694.15,168.74h1.37v1.48h-1.37zM698.26,168.74h1.37v1.48h-1.37zM694.15,170.22h1.37v1.48h-1.37zM695.52,170.22h1.37v1.48h-1.37zM696.89,170.22h1.37v1.48h-1.37zM698.26,170.22h1.37v1.48h-1.37zM699.63,170.22h1.37v1.48h-1.37zM698.26,171.70h1.37v1.48h-1.37zM698.26,173.18h1.37v1.48h-1.37z" fill="#1c2304" stroke="#1c2304" stroke-width="0.25"/>
<line x1="593.00" y1="206.90" x2="593.00" y2="226.00" stroke="#8c1f22" stroke-width="1.3" />
<rect x="586.00" y="210.80" width="3.90" height="3.90" fill="#3a4cf0" stroke="none" stroke-width="1" />
<text transform="translate(590.90,216.2) rotate(-90)" text-anchor="end" font-size="8.4" fill="#111" stroke="#111" stroke-width="0.3" textLength="4.5" lengthAdjust="spacingAndGlyphs">1</text>
<text transform="translate(595.90,202.8) rotate(-90)" stroke="#111" stroke-width="0.33" font-size="8.9" fill="#111" textLength="16.0" lengthAdjust="spacingAndGlyphs">VSS</text>
<line x1="602.27" y1="206.90" x2="602.27" y2="226.00" stroke="#8c1f22" stroke-width="1.3" />
<rect x="595.27" y="210.80" width="3.90" height="3.90" fill="#f0323f" stroke="none" stroke-width="1" />
<text transform="translate(600.17,216.2) rotate(-90)" text-anchor="end" font-size="8.4" fill="#111" stroke="#111" stroke-width="0.3" textLength="4.5" lengthAdjust="spacingAndGlyphs">2</text>
<text transform="translate(605.17,202.8) rotate(-90)" stroke="#111" stroke-width="0.33" font-size="8.9" fill="#111" textLength="16.4" lengthAdjust="spacingAndGlyphs">VDD</text>
<line x1="611.54" y1="206.90" x2="611.54" y2="226.00" stroke="#8c1f22" stroke-width="1.3" />
<rect x="604.54" y="210.80" width="3.90" height="3.90" fill="#8c8c96" stroke="none" stroke-width="1" />
<text transform="translate(609.44,216.2) rotate(-90)" text-anchor="end" font-size="8.4" fill="#111" stroke="#111" stroke-width="0.3" textLength="4.5" lengthAdjust="spacingAndGlyphs">3</text>
<text transform="translate(614.44,202.8) rotate(-90)" stroke="#111" stroke-width="0.33" font-size="8.9" fill="#111" textLength="16.0" lengthAdjust="spacingAndGlyphs">VEE</text>
<line x1="630.08" y1="206.90" x2="630.08" y2="226.00" stroke="#8c1f22" stroke-width="1.3" />
<rect x="623.08" y="210.80" width="3.90" height="3.90" fill="#f0323f" stroke="none" stroke-width="1" />
<text transform="translate(627.98,216.2) rotate(-90)" text-anchor="end" font-size="8.4" fill="#111" stroke="#111" stroke-width="0.3" textLength="4.5" lengthAdjust="spacingAndGlyphs">4</text>
<text transform="translate(632.98,202.8) rotate(-90)" stroke="#111" stroke-width="0.33" font-size="8.9" fill="#111" textLength="12.2" lengthAdjust="spacingAndGlyphs">RS</text>
<line x1="639.35" y1="206.90" x2="639.35" y2="226.00" stroke="#8c1f22" stroke-width="1.3" />
<rect x="632.35" y="210.80" width="3.90" height="3.90" fill="#3a4cf0" stroke="none" stroke-width="1" />
<text transform="translate(637.25,216.2) rotate(-90)" text-anchor="end" font-size="8.4" fill="#111" stroke="#111" stroke-width="0.3" textLength="4.5" lengthAdjust="spacingAndGlyphs">5</text>
<text transform="translate(642.25,202.8) rotate(-90)" stroke="#111" stroke-width="0.33" font-size="8.9" fill="#111" textLength="13.8" lengthAdjust="spacingAndGlyphs">RW</text>
<line x1="648.62" y1="206.90" x2="648.62" y2="226.00" stroke="#8c1f22" stroke-width="1.3" />
<rect x="641.62" y="210.80" width="3.90" height="3.90" fill="#3a4cf0" stroke="none" stroke-width="1" />
<text transform="translate(646.52,216.2) rotate(-90)" text-anchor="end" font-size="8.4" fill="#111" stroke="#111" stroke-width="0.3" textLength="4.5" lengthAdjust="spacingAndGlyphs">6</text>
<text transform="translate(651.52,202.8) rotate(-90)" stroke="#111" stroke-width="0.33" font-size="8.9" fill="#111" textLength="5.0" lengthAdjust="spacingAndGlyphs">E</text>
<line x1="667.16" y1="206.90" x2="667.16" y2="226.00" stroke="#8c1f22" stroke-width="1.3" />
<rect x="660.16" y="210.80" width="3.90" height="3.90" fill="#3a4cf0" stroke="none" stroke-width="1" />
<text transform="translate(665.06,216.2) rotate(-90)" text-anchor="end" font-size="8.4" fill="#111" stroke="#111" stroke-width="0.3" textLength="4.5" lengthAdjust="spacingAndGlyphs">7</text>
<text transform="translate(670.06,202.8) rotate(-90)" stroke="#111" stroke-width="0.33" font-size="8.9" fill="#111" textLength="9.6" lengthAdjust="spacingAndGlyphs">D0</text>
<line x1="676.43" y1="206.90" x2="676.43" y2="226.00" stroke="#8c1f22" stroke-width="1.3" />
<rect x="669.43" y="210.80" width="3.90" height="3.90" fill="#3a4cf0" stroke="none" stroke-width="1" />
<text transform="translate(674.33,216.2) rotate(-90)" text-anchor="end" font-size="8.4" fill="#111" stroke="#111" stroke-width="0.3" textLength="4.5" lengthAdjust="spacingAndGlyphs">8</text>
<text transform="translate(679.33,202.8) rotate(-90)" stroke="#111" stroke-width="0.33" font-size="8.9" fill="#111" textLength="9.6" lengthAdjust="spacingAndGlyphs">D1</text>
<line x1="685.70" y1="206.90" x2="685.70" y2="226.00" stroke="#8c1f22" stroke-width="1.3" />
<rect x="678.70" y="210.80" width="3.90" height="3.90" fill="#3a4cf0" stroke="none" stroke-width="1" />
<text transform="translate(683.60,216.2) rotate(-90)" text-anchor="end" font-size="8.4" fill="#111" stroke="#111" stroke-width="0.3" textLength="4.5" lengthAdjust="spacingAndGlyphs">9</text>
<text transform="translate(688.60,202.8) rotate(-90)" stroke="#111" stroke-width="0.33" font-size="8.9" fill="#111" textLength="9.6" lengthAdjust="spacingAndGlyphs">D2</text>
<line x1="694.97" y1="206.90" x2="694.97" y2="226.00" stroke="#8c1f22" stroke-width="1.3" />
<rect x="687.97" y="210.80" width="3.90" height="3.90" fill="#3a4cf0" stroke="none" stroke-width="1" />
<text transform="translate(692.87,216.2) rotate(-90)" text-anchor="end" font-size="8.4" fill="#111" stroke="#111" stroke-width="0.3" textLength="9.0" lengthAdjust="spacingAndGlyphs">10</text>
<text transform="translate(697.87,202.8) rotate(-90)" stroke="#111" stroke-width="0.33" font-size="8.9" fill="#111" textLength="9.6" lengthAdjust="spacingAndGlyphs">D3</text>
<line x1="704.24" y1="206.90" x2="704.24" y2="226.00" stroke="#8c1f22" stroke-width="1.3" />
<rect x="697.24" y="210.80" width="3.90" height="3.90" fill="#3a4cf0" stroke="none" stroke-width="1" />
<text transform="translate(702.14,216.2) rotate(-90)" text-anchor="end" font-size="8.4" fill="#111" stroke="#111" stroke-width="0.3" textLength="9.0" lengthAdjust="spacingAndGlyphs">11</text>
<text transform="translate(707.14,202.8) rotate(-90)" stroke="#111" stroke-width="0.33" font-size="8.9" fill="#111" textLength="9.6" lengthAdjust="spacingAndGlyphs">D4</text>
<line x1="713.51" y1="206.90" x2="713.51" y2="226.00" stroke="#8c1f22" stroke-width="1.3" />
<rect x="706.51" y="210.80" width="3.90" height="3.90" fill="#3a4cf0" stroke="none" stroke-width="1" />
<text transform="translate(711.41,216.2) rotate(-90)" text-anchor="end" font-size="8.4" fill="#111" stroke="#111" stroke-width="0.3" textLength="9.0" lengthAdjust="spacingAndGlyphs">12</text>
<text transform="translate(716.41,202.8) rotate(-90)" stroke="#111" stroke-width="0.33" font-size="8.9" fill="#111" textLength="9.6" lengthAdjust="spacingAndGlyphs">D5</text>
<line x1="722.78" y1="206.90" x2="722.78" y2="226.00" stroke="#8c1f22" stroke-width="1.3" />
<rect x="715.78" y="210.80" width="3.90" height="3.90" fill="#f0323f" stroke="none" stroke-width="1" />
<text transform="translate(720.68,216.2) rotate(-90)" text-anchor="end" font-size="8.4" fill="#111" stroke="#111" stroke-width="0.3" textLength="9.0" lengthAdjust="spacingAndGlyphs">13</text>
<text transform="translate(725.68,202.8) rotate(-90)" stroke="#111" stroke-width="0.33" font-size="8.9" fill="#111" textLength="9.6" lengthAdjust="spacingAndGlyphs">D6</text>
<line x1="732.05" y1="206.90" x2="732.05" y2="226.00" stroke="#8c1f22" stroke-width="1.3" />
<rect x="725.05" y="210.80" width="3.90" height="3.90" fill="#3a4cf0" stroke="none" stroke-width="1" />
<text transform="translate(729.95,216.2) rotate(-90)" text-anchor="end" font-size="8.4" fill="#111" stroke="#111" stroke-width="0.3" textLength="9.0" lengthAdjust="spacingAndGlyphs">14</text>
<text transform="translate(734.95,202.8) rotate(-90)" stroke="#111" stroke-width="0.33" font-size="8.9" fill="#111" textLength="9.6" lengthAdjust="spacingAndGlyphs">D7</text>
<polyline points="593.00,226.00 593.00,263.20 676.43,263.20" fill="none" stroke="#1e5c20" stroke-width="1.2" />
<line x1="602.27" y1="226.00" x2="602.27" y2="271.80" stroke="#1e5c20" stroke-width="1.2" />
<polyline points="597.67,271.80 606.87,271.80 602.27,281.00 597.67,271.80" fill="none" stroke="#1e5c20" stroke-width="1.2" />
<line x1="667.16" y1="226.00" x2="667.16" y2="267.40" stroke="#1e5c20" stroke-width="1.2" />
<line x1="676.43" y1="226.00" x2="676.43" y2="244.20" stroke="#1e5c20" stroke-width="1.2" />
<line x1="685.70" y1="226.00" x2="685.70" y2="244.20" stroke="#1e5c20" stroke-width="1.2" />
<polyline points="667.16,244.20 694.97,244.20 694.97,226.00" fill="none" stroke="#1e5c20" stroke-width="1.2" />
<circle cx="667.16" cy="244.20" r="2.30" fill="#3448e8" stroke="none" stroke-width="1" />
<circle cx="676.43" cy="244.20" r="2.30" fill="#3448e8" stroke="none" stroke-width="1" />
<circle cx="685.70" cy="244.20" r="2.30" fill="#3448e8" stroke="none" stroke-width="1" />
<line x1="661.86" y1="267.40" x2="672.66" y2="267.40" stroke="#1e5c20" stroke-width="1.3" />
<line x1="664.36" y1="270.10" x2="669.76" y2="270.10" stroke="#1e5c20" stroke-width="1.2" />
<line x1="665.76" y1="272.50" x2="668.36" y2="272.50" stroke="#1e5c20" stroke-width="1.2" />
<polyline points="537.50,59.50 533.20,68.80 541.90,68.80 537.50,59.50" fill="none" stroke="#1e5c20" stroke-width="1.2" />
<line x1="537.50" y1="68.80" x2="537.50" y2="105.50" stroke="#1e5c20" stroke-width="1.2" />
<polyline points="537.50,87.00 510.00,87.00 510.00,105.50" fill="none" stroke="#1e5c20" stroke-width="1.2" />
<circle cx="537.50" cy="87.00" r="2.30" fill="#f0323f" stroke="none" stroke-width="1" />
<line x1="510.00" y1="105.50" x2="510.00" y2="114.50" stroke="#8c1f22" stroke-width="1.3" />
<rect x="505.90" y="114.50" width="8.20" height="28.50" fill="#cfccae" stroke="#8c1f22" stroke-width="1.3" />
<line x1="510.00" y1="143.00" x2="510.00" y2="152.50" stroke="#8c1f22" stroke-width="1.3" />
<line x1="510.00" y1="152.50" x2="510.00" y2="169.00" stroke="#f0604c" stroke-width="1.2" />
<rect x="502.80" y="102.80" width="4.40" height="4.40" fill="#f0323f" stroke="none" stroke-width="1" />
<rect x="502.80" y="149.80" width="4.40" height="4.40" fill="#f0323f" stroke="none" stroke-width="1" />
<line x1="537.50" y1="105.50" x2="537.50" y2="114.50" stroke="#8c1f22" stroke-width="1.3" />
<rect x="533.40" y="114.50" width="8.20" height="28.50" fill="#cfccae" stroke="#8c1f22" stroke-width="1.3" />
<line x1="537.50" y1="143.00" x2="537.50" y2="152.50" stroke="#8c1f22" stroke-width="1.3" />
<line x1="537.50" y1="152.50" x2="537.50" y2="169.00" stroke="#f0604c" stroke-width="1.2" />
<rect x="530.30" y="102.80" width="4.40" height="4.40" fill="#f0323f" stroke="none" stroke-width="1" />
<rect x="530.30" y="149.80" width="4.40" height="4.40" fill="#f0323f" stroke="none" stroke-width="1" />
<text transform="translate(518.60,125.10) scale(0.8,1)" font-size="12.3" fill="#111" text-anchor="start" font-weight="normal" font-style="normal"  stroke="#111" stroke-width="0.12">R1</text>
<text transform="translate(518.60,135.00) scale(0.86,1)" font-size="8.7" fill="#111" text-anchor="start" font-weight="normal" font-style="normal"  stroke="#111" stroke-width="0.2">PULLUP</text>
<text transform="translate(518.60,144.50) scale(0.78,1)" font-size="8.9" fill="#9a9a9a" text-anchor="start" font-weight="normal" font-style="normal" >&lt;TEXT&gt;</text>
<text transform="translate(546.20,125.10) scale(0.8,1)" font-size="12.3" fill="#111" text-anchor="start" font-weight="normal" font-style="normal"  stroke="#111" stroke-width="0.12">R2</text>
<text transform="translate(547.80,135.00) scale(0.86,1)" font-size="8.7" fill="#111" text-anchor="start" font-weight="normal" font-style="normal"  stroke="#111" stroke-width="0.2">PULLUP</text>
<text transform="translate(547.80,144.50) scale(0.78,1)" font-size="8.9" fill="#9a9a9a" text-anchor="start" font-weight="normal" font-style="normal" >&lt;TEXT&gt;</text>
<circle cx="510.10" cy="179.30" r="10.40" fill="#040000" stroke="#5a0a0a" stroke-width="1.3" />
<line x1="510.10" y1="166.30" x2="510.10" y2="189.70" stroke="#9c1414" stroke-width="1.1" />
<polyline points="504.10,176.60 516.10,176.60 510.10,183.90 504.10,176.60" fill="none" stroke="#a81818" stroke-width="1.0" />
<line x1="504.50" y1="184.40" x2="515.50" y2="184.40" stroke="#a81818" stroke-width="1.0" />
<circle cx="537.50" cy="179.30" r="10.40" fill="#040000" stroke="#5a0a0a" stroke-width="1.3" />
<line x1="537.50" y1="166.30" x2="537.50" y2="189.70" stroke="#9c1414" stroke-width="1.1" />
<polyline points="531.50,176.60 543.50,176.60 537.50,183.90 531.50,176.60" fill="none" stroke="#a81818" stroke-width="1.0" />
<line x1="531.90" y1="184.40" x2="542.90" y2="184.40" stroke="#a81818" stroke-width="1.0" />
<text transform="translate(479.80,187.40) scale(0.8,1)" font-size="12.3" fill="#111" text-anchor="start" font-weight="normal" font-style="normal"  stroke="#111" stroke-width="0.12">D2</text>
<text transform="translate(554.00,178.70) scale(0.82,1)" font-size="12.3" fill="#111" text-anchor="start" font-weight="normal" font-style="normal"  stroke="#111" stroke-width="0.12">D1</text>
<text transform="translate(554.00,189.30) scale(0.88,1)" font-size="8.9" fill="#111" text-anchor="start" font-weight="normal" font-style="normal"  stroke="#111" stroke-width="0.25">LED-BLUE</text>
<text transform="translate(526.60,197.80) scale(0.78,1)" font-size="8.9" fill="#9a9a9a" text-anchor="start" font-weight="normal" font-style="normal" >&lt;TEXT&gt;</text>
<text transform="translate(554.80,197.80) scale(0.78,1)" font-size="8.9" fill="#9a9a9a" text-anchor="start" font-weight="normal" font-style="normal" >&lt;TEXT&gt;</text>
<text transform="translate(460.80,207.30) scale(0.9,1)" font-size="8.7" fill="#111" text-anchor="start" font-weight="normal" font-style="normal"  stroke="#111" stroke-width="0.15">LED-YELLOW</text>
<line x1="490.80" y1="249.00" x2="490.80" y2="259.20" stroke="#8c1f22" stroke-width="1.3" />
<circle cx="490.80" cy="261.90" r="2.60" fill="#e4e1cd" stroke="#8c1f22" stroke-width="1.1" />
<circle cx="490.80" cy="283.10" r="2.60" fill="#e4e1cd" stroke="#8c1f22" stroke-width="1.1" />
<line x1="490.80" y1="285.70" x2="490.80" y2="290.20" stroke="#8c1f22" stroke-width="1.3" />
<rect x="478.40" y="265.30" width="5.50" height="14.50" fill="#dbd8c2" stroke="#8c1f22" stroke-width="1.2" />
<line x1="483.90" y1="259.00" x2="483.90" y2="285.30" stroke="#8c1f22" stroke-width="1.3" />
<rect x="483.60" y="246.60" width="4.80" height="4.80" fill="#f0323f" stroke="none" stroke-width="1" />
<circle cx="481.90" cy="291.00" r="3.30" fill="#e41414" stroke="#b00808" stroke-width="0.8" />
<circle cx="481.90" cy="291.00" r="1.30" fill="#400000" stroke="none" stroke-width="1" />
<rect x="483.90" y="292.20" width="5.00" height="5.00" fill="#3a4cf0" stroke="none" stroke-width="1" />
<line x1="537.60" y1="249.00" x2="537.60" y2="259.20" stroke="#8c1f22" stroke-width="1.3" />
<circle cx="537.60" cy="261.90" r="2.60" fill="#e4e1cd" stroke="#8c1f22" stroke-width="1.1" />
<circle cx="537.60" cy="283.10" r="2.60" fill="#e4e1cd" stroke="#8c1f22" stroke-width="1.1" />
<line x1="537.60" y1="285.70" x2="537.60" y2="290.20" stroke="#8c1f22" stroke-width="1.3" />
<rect x="525.20" y="265.30" width="5.50" height="14.50" fill="#dbd8c2" stroke="#8c1f22" stroke-width="1.2" />
<line x1="530.70" y1="259.00" x2="530.70" y2="285.30" stroke="#8c1f22" stroke-width="1.3" />
<rect x="530.40" y="246.60" width="4.80" height="4.80" fill="#f0323f" stroke="none" stroke-width="1" />
<circle cx="528.70" cy="291.00" r="3.30" fill="#e41414" stroke="#b00808" stroke-width="0.8" />
<circle cx="528.70" cy="291.00" r="1.30" fill="#400000" stroke="none" stroke-width="1" />
<rect x="530.70" y="292.20" width="5.00" height="5.00" fill="#3a4cf0" stroke="none" stroke-width="1" />
<polyline points="490.80,290.20 490.80,299.60 575.10,299.60" fill="none" stroke="#1e5c20" stroke-width="1.2" />
<line x1="537.60" y1="290.20" x2="537.60" y2="299.60" stroke="#1e5c20" stroke-width="1.2" />
<circle cx="537.60" cy="299.60" r="2.30" fill="#3a4cf0" stroke="none" stroke-width="1" />
<line x1="575.10" y1="291.00" x2="575.10" y2="308.20" stroke="#1e5c20" stroke-width="1.3" />
<line x1="579.50" y1="295.30" x2="579.50" y2="304.00" stroke="#1e5c20" stroke-width="1.3" />
<line x1="583.50" y1="298.40" x2="583.50" y2="300.80" stroke="#1e5c20" stroke-width="1.3" />
<g stroke="#14148c" stroke-width="1.25" fill="none"><path d="M454.2,273.8l1.2,1 M454.2,276.0l1.2,1 M454.2,279.8l1.4,-2.4 M456.4,274.0h4.8 M458.8,272.8v1.2 M456.8,275.6h4v2.6h-4z M456.8,276.9h4 M457.6,279.8l1,-1.4 M460.0,279.8l-1,-1.4"/><path d="M462.6,274.2h4v5h-4z"/></g>
<g stroke="#14148c" stroke-width="1.25" fill="none"><path d="M500.6,273.8l1.2,1 M500.6,276.0l1.2,1 M500.6,279.8l1.4,-2.4 M502.8,274.0h4.8 M505.2,272.8v1.2 M503.2,275.6h4v2.6h-4z M503.2,276.9h4 M504.0,279.8l1,-1.4 M506.4,279.8l-1,-1.4"/><path d="M508.2,273.8h7 M510.2,272.8v2 M513.2,272.8v2 M509.6,275.4l-1.4,2 M509.2,276.2h5.6v3.4l-1,0.2 M510.0,277.4h2.6v1.8h-2.6z"/></g>
<rect x="190.60" y="421.40" width="438.60" height="156.60" fill="#0c40dc" stroke="none" stroke-width="1" />
<rect x="190.60" y="421.40" width="438.60" height="18.20" fill="url(#tb)" stroke="none" stroke-width="1" />
<rect x="193.20" y="439.40" width="433.20" height="156.60" fill="#cfccd1" stroke="none" stroke-width="1" />
<text x="194.3" y="434.9" font-size="11.3" fill="#fff" font-weight="bold" textLength="102.9" lengthAdjust="spacing">VSM Oscilloscope</text>
<rect x="613.80" y="425.60" width="11.40" height="11.20" fill="#dc4a2c" stroke="#fff" stroke-width="0.9" rx="1.8"/>
<line x1="616.80" y1="428.50" x2="622.20" y2="433.90" stroke="#fff" stroke-width="1.6" />
<line x1="622.20" y1="428.50" x2="616.80" y2="433.90" stroke="#fff" stroke-width="1.6" />
<rect x="203.20" y="450.20" width="222.60" height="135.00" fill="#aeaca4" stroke="none" stroke-width="1" />
<rect x="204.50" y="451.50" width="221.30" height="135.00" fill="#f6f6f2" stroke="none" stroke-width="1" />
<rect x="204.50" y="451.50" width="219.40" height="135.00" fill="#000" stroke="none" stroke-width="1" />
<rect x="206.00" y="453.00" width="217.20" height="135.00" fill="#052d07" stroke="none" stroke-width="1" />
<line x1="227.72" y1="453.00" x2="227.72" y2="576.00" stroke="#000" stroke-width="1.1" />
<line x1="249.44" y1="453.00" x2="249.44" y2="576.00" stroke="#000" stroke-width="1.1" />
<line x1="271.16" y1="453.00" x2="271.16" y2="576.00" stroke="#000" stroke-width="1.1" />
<line x1="292.88" y1="453.00" x2="292.88" y2="576.00" stroke="#000" stroke-width="1.1" />
<line x1="314.60" y1="453.00" x2="314.60" y2="576.00" stroke="#000" stroke-width="1.1" />
<line x1="336.32" y1="453.00" x2="336.32" y2="576.00" stroke="#000" stroke-width="1.1" />
<line x1="358.04" y1="453.00" x2="358.04" y2="576.00" stroke="#000" stroke-width="1.1" />
<line x1="379.76" y1="453.00" x2="379.76" y2="576.00" stroke="#000" stroke-width="1.1" />
<line x1="401.48" y1="453.00" x2="401.48" y2="576.00" stroke="#000" stroke-width="1.1" />
<line x1="206.00" y1="474.72" x2="423.20" y2="474.72" stroke="#000" stroke-width="1.1" />
<line x1="206.00" y1="496.44" x2="423.20" y2="496.44" stroke="#000" stroke-width="1.1" />
<line x1="206.00" y1="518.16" x2="423.20" y2="518.16" stroke="#000" stroke-width="1.1" />
<line x1="206.00" y1="539.88" x2="423.20" y2="539.88" stroke="#000" stroke-width="1.1" />
<line x1="206.00" y1="561.60" x2="423.20" y2="561.60" stroke="#000" stroke-width="1.1" />
<polyline points="206.00,533.80 216.60,533.80 216.60,480.60 227.90,480.60 227.90,533.80 238.40,533.80 238.40,480.60 250.00,480.60 250.00,533.80 260.50,533.80 260.50,480.60 271.80,480.60 271.80,533.80 282.30,533.80 282.30,480.60 293.90,480.60 293.90,533.80 304.50,533.80 304.50,480.60 315.70,480.60 315.70,533.80 327.30,533.80 327.30,480.60 338.50,480.60 338.50,533.80 349.10,533.80 349.10,480.60 360.70,480.60 360.70,533.80 371.20,533.80 371.20,480.60 382.50,480.60 382.50,533.80 394.00,533.80 394.00,480.60 405.30,480.60 405.30,533.80 415.80,533.80 415.80,480.60 423.20,480.60" fill="none" stroke="#18d818" stroke-width="1.2" stroke-linejoin="miter"/>
<polygon points="445.90,451.00 451.40,451.00 451.40,512.60 458.00,520.30 466.40,520.30 466.40,534.60 448.10,534.60 436.40,522.50 436.40,460.90" fill="#e9e9e9" stroke="#1a1a1a" stroke-width="1.3" stroke-linejoin="round"/>
<polygon points="454.00,451.40 509.70,451.40 520.70,462.00 520.70,522.50 509.70,534.60 498.70,534.60 498.70,520.30 505.30,513.70 505.30,468.60 502.00,464.60 454.00,464.60" fill="#e9e9e9" stroke="#1a1a1a" stroke-width="1.3" stroke-linejoin="round"/>
<text x="458.00" y="461.00" font-size="7.8" fill="#111" text-anchor="start" font-weight="normal" font-style="normal"  stroke="#111" stroke-width="0.25">500 200 100</text>
<text x="447.20" y="470.60" font-size="7.8" fill="#111" text-anchor="end" font-weight="normal" font-style="normal"  stroke="#111" stroke-width="0.25">1</text>
<text x="447.20" y="486.00" font-size="7.8" fill="#111" text-anchor="end" font-weight="normal" font-style="normal"  stroke="#111" stroke-width="0.25">2</text>
<text x="447.20" y="499.60" font-size="7.8" fill="#111" text-anchor="end" font-weight="normal" font-style="normal"  stroke="#111" stroke-width="0.25">5</text>
<text x="447.40" y="514.80" font-size="7.8" fill="#111" text-anchor="end" font-weight="normal" font-style="normal"  stroke="#111" stroke-width="0.25">10</text>
<text x="452.40" y="530.80" font-size="7.8" fill="#111" text-anchor="start" font-weight="normal" font-style="normal"  stroke="#111" stroke-width="0.25">20</text>
<text x="508.60" y="470.90" font-size="7.8" fill="#111" text-anchor="start" font-weight="normal" font-style="normal"  stroke="#111" stroke-width="0.25">50</text>
<text x="508.60" y="486.30" font-size="7.8" fill="#111" text-anchor="start" font-weight="normal" font-style="normal"  stroke="#111" stroke-width="0.25">20</text>
<text x="508.60" y="501.40" font-size="7.8" fill="#111" text-anchor="start" font-weight="normal" font-style="normal"  stroke="#111" stroke-width="0.25">10</text>
<text x="510.40" y="514.20" font-size="7.8" fill="#111" text-anchor="start" font-weight="normal" font-style="normal"  stroke="#111" stroke-width="0.25">5</text>
<text x="503.00" y="530.80" font-size="7.8" fill="#111" text-anchor="start" font-weight="normal" font-style="normal"  stroke="#111" stroke-width="0.25">2</text>
<polygon points="445.90,556.40 451.40,556.40 451.40,618.00 458.00,625.70 466.40,625.70 466.40,640.00 448.10,640.00 436.40,627.90 436.40,566.30" fill="#e9e9e9" stroke="#1a1a1a" stroke-width="1.3" stroke-linejoin="round"/>
<polygon points="454.00,556.80 509.70,556.80 520.70,567.40 520.70,627.90 509.70,640.00 498.70,640.00 498.70,625.70 505.30,619.10 505.30,574.00 502.00,570.00 454.00,570.00" fill="#e9e9e9" stroke="#1a1a1a" stroke-width="1.3" stroke-linejoin="round"/>
<text x="458.00" y="566.40" font-size="7.8" fill="#111" text-anchor="start" font-weight="normal" font-style="normal"  stroke="#111" stroke-width="0.25">500 200 100</text>
<text x="447.20" y="576.00" font-size="7.8" fill="#111" text-anchor="end" font-weight="normal" font-style="normal"  stroke="#111" stroke-width="0.25">1</text>
<text x="447.20" y="591.40" font-size="7.8" fill="#111" text-anchor="end" font-weight="normal" font-style="normal"  stroke="#111" stroke-width="0.25">2</text>
<text x="447.20" y="605.00" font-size="7.8" fill="#111" text-anchor="end" font-weight="normal" font-style="normal"  stroke="#111" stroke-width="0.25">5</text>
<text x="447.40" y="620.20" font-size="7.8" fill="#111" text-anchor="end" font-weight="normal" font-style="normal"  stroke="#111" stroke-width="0.25">10</text>
<text x="452.40" y="636.20" font-size="7.8" fill="#111" text-anchor="start" font-weight="normal" font-style="normal"  stroke="#111" stroke-width="0.25">20</text>
<text x="508.60" y="576.30" font-size="7.8" fill="#111" text-anchor="start" font-weight="normal" font-style="normal"  stroke="#111" stroke-width="0.25">50</text>
<text x="508.60" y="591.70" font-size="7.8" fill="#111" text-anchor="start" font-weight="normal" font-style="normal"  stroke="#111" stroke-width="0.25">20</text>
<text x="508.60" y="606.80" font-size="7.8" fill="#111" text-anchor="start" font-weight="normal" font-style="normal"  stroke="#111" stroke-width="0.25">10</text>
<text x="510.40" y="619.60" font-size="7.8" fill="#111" text-anchor="start" font-weight="normal" font-style="normal"  stroke="#111" stroke-width="0.25">5</text>
<text x="503.00" y="636.20" font-size="7.8" fill="#111" text-anchor="start" font-weight="normal" font-style="normal"  stroke="#111" stroke-width="0.25">2</text>
<text x="463.90" y="475.20" font-size="8.3" fill="#111" font-weight="bold" font-style="italic" text-anchor="start" textLength="30.40" lengthAdjust="spacingAndGlyphs" stroke="#111" stroke-width="0.15">Y-Gain 1</text>
<circle cx="480.50" cy="497.50" r="15.20" fill="#000" opacity="0.35" filter="url(#sh)"/>
<circle cx="478.90" cy="495.50" r="15.20" fill="url(#kr)" stroke="none" stroke-width="1" />
<line x1="478.90" y1="495.50" x2="464.48" y2="492.17" stroke="#222" stroke-width="1.5" />
<rect x="469.60" y="523.80" width="26.40" height="10.60" fill="#000" stroke="none" stroke-width="0" rx="2.6"/>
<text x="482.70" y="532.90" font-size="10.4" fill="#30e030" text-anchor="middle" font-weight="normal" font-style="normal"  stroke="#30e030" stroke-width="0.2">2.0</text>
<text x="446.20" y="544.20" font-size="7.6" fill="#111" text-anchor="start" font-weight="normal" font-style="normal"  stroke="#111" stroke-width="0.25">V/Div</text>
<text x="491.00" y="544.20" font-size="7.6" fill="#111" text-anchor="start" font-weight="normal" font-style="normal"  stroke="#111" stroke-width="0.25">mV/Div</text>
<text x="525.60" y="457.20" font-size="7.6" fill="#111" font-weight="bold" font-style="italic" text-anchor="start" textLength="21.90" lengthAdjust="spacingAndGlyphs" stroke="#111" stroke-width="0.15">Y-Pos 1</text>
<circle cx="538.10" cy="476.00" r="11.30" fill="#000" opacity="0.35" filter="url(#sh)"/>
<circle cx="536.50" cy="474.00" r="11.30" fill="url(#kg)" stroke="none" stroke-width="1" />
<line x1="536.50" y1="474.00" x2="536.14" y2="463.61" stroke="#222" stroke-width="1.5" />
<text x="525.60" y="498.60" font-size="7.6" fill="#111" font-weight="bold" font-style="italic" text-anchor="start" textLength="21.30" lengthAdjust="spacingAndGlyphs" stroke="#111" stroke-width="0.15">Y-Pos 2</text>
<circle cx="538.10" cy="517.40" r="11.30" fill="#000" opacity="0.35" filter="url(#sh)"/>
<circle cx="536.50" cy="515.40" r="11.30" fill="url(#kg)" stroke="none" stroke-width="1" />
<line x1="536.50" y1="515.40" x2="525.98" y2="512.18" stroke="#222" stroke-width="1.5" />
<rect x="564.20" y="452.20" width="17.30" height="17.30" fill="#808080" stroke="#222" stroke-width="1.1" />
<polyline points="565.50,468.20 565.50,453.50 580.20,453.50" fill="none" stroke="#c8c8c8" stroke-width="0.9" />
<rect x="564.20" y="477.50" width="17.30" height="17.30" fill="#808080" stroke="#222" stroke-width="1.1" />
<polyline points="565.50,493.50 565.50,478.80 580.20,478.80" fill="none" stroke="#c8c8c8" stroke-width="0.9" />
<text x="589.30" y="457.00" font-size="8.2" fill="#111" font-weight="bold" font-style="italic" text-anchor="start" textLength="15.80" lengthAdjust="spacingAndGlyphs" stroke="#111" stroke-width="0.15">Ch.1</text>
<text x="589.30" y="467.40" font-size="8.2" fill="#111" font-weight="bold" font-style="italic" text-anchor="start" textLength="16.10" lengthAdjust="spacingAndGlyphs" stroke="#111" stroke-width="0.15">Ch.2</text>
<text x="589.70" y="483.50" font-size="8.2" fill="#111" font-weight="bold" font-style="italic" text-anchor="start" textLength="15.00" lengthAdjust="spacingAndGlyphs" stroke="#111" stroke-width="0.15">Dual</text>
<text x="590.80" y="494.10" font-size="8.2" fill="#111" font-weight="bold" font-style="italic" text-anchor="start" textLength="11.00" lengthAdjust="spacingAndGlyphs" stroke="#111" stroke-width="0.15">X-Y</text>
<circle cx="615.40" cy="455.00" r="3.10" fill="#38f038" stroke="#7cff7c" stroke-width="0.8" />
<circle cx="615.40" cy="465.50" r="2.90" fill="#0c5a14" stroke="#2a7a30" stroke-width="0.7" />
<circle cx="615.40" cy="480.70" r="2.90" fill="#0c5a14" stroke="#2a7a30" stroke-width="0.7" />
<circle cx="615.40" cy="491.60" r="2.90" fill="#0c5a14" stroke="#2a7a30" stroke-width="0.7" />
<text x="560.40" y="509.90" font-size="8.0" fill="#111" font-weight="bold" font-style="italic" text-anchor="start" textLength="24.30" lengthAdjust="spacingAndGlyphs" stroke="#111" stroke-width="0.15">Trigger</text>
<text x="596.60" y="509.90" font-size="8.0" fill="#111" font-weight="bold" font-style="italic" text-anchor="start" textLength="21.50" lengthAdjust="spacingAndGlyphs" stroke="#111" stroke-width="0.15">X -Pos</text>
<circle cx="573.20" cy="529.90" r="11.30" fill="#000" opacity="0.35" filter="url(#sh)"/>
<circle cx="571.60" cy="527.90" r="11.30" fill="url(#kb)" stroke="none" stroke-width="1" />
<line x1="571.60" y1="527.90" x2="571.23" y2="517.31" stroke="#222" stroke-width="1.5" />
<circle cx="609.50" cy="529.90" r="11.30" fill="#000" opacity="0.35" filter="url(#sh)"/>
<circle cx="607.90" cy="527.90" r="11.30" fill="url(#kb)" stroke="none" stroke-width="1" />
<line x1="607.90" y1="527.90" x2="607.53" y2="517.31" stroke="#222" stroke-width="1.5" />
<polygon points="526.6,562 536.5,549.2 546.4,549.2 546.4,584 526.6,584" fill="#e9e9e9" stroke="#1a1a1a" stroke-width="1.3"/>
<polygon points="549.7,549.2 604.6,549.2 615.6,560.9 615.6,584 549.7,584" fill="#e9e9e9" stroke="#1a1a1a" stroke-width="1.3"/>
<line x1="551.60" y1="563.60" x2="596.00" y2="563.60" stroke="#333" stroke-width="1.0" />
<text x="544.30" y="559.90" font-size="7.8" fill="#111" text-anchor="end" font-weight="normal" font-style="normal"  stroke="#111" stroke-width="0.25">1</text>
<text x="551.90" y="560.20" font-size="7.8" fill="#111" font-weight="normal" font-style="normal" text-anchor="start" textLength="52.40" lengthAdjust="spacingAndGlyphs" stroke="#111" stroke-width="0.25">500 200 100  50</text>
</svg></div></body></html>
